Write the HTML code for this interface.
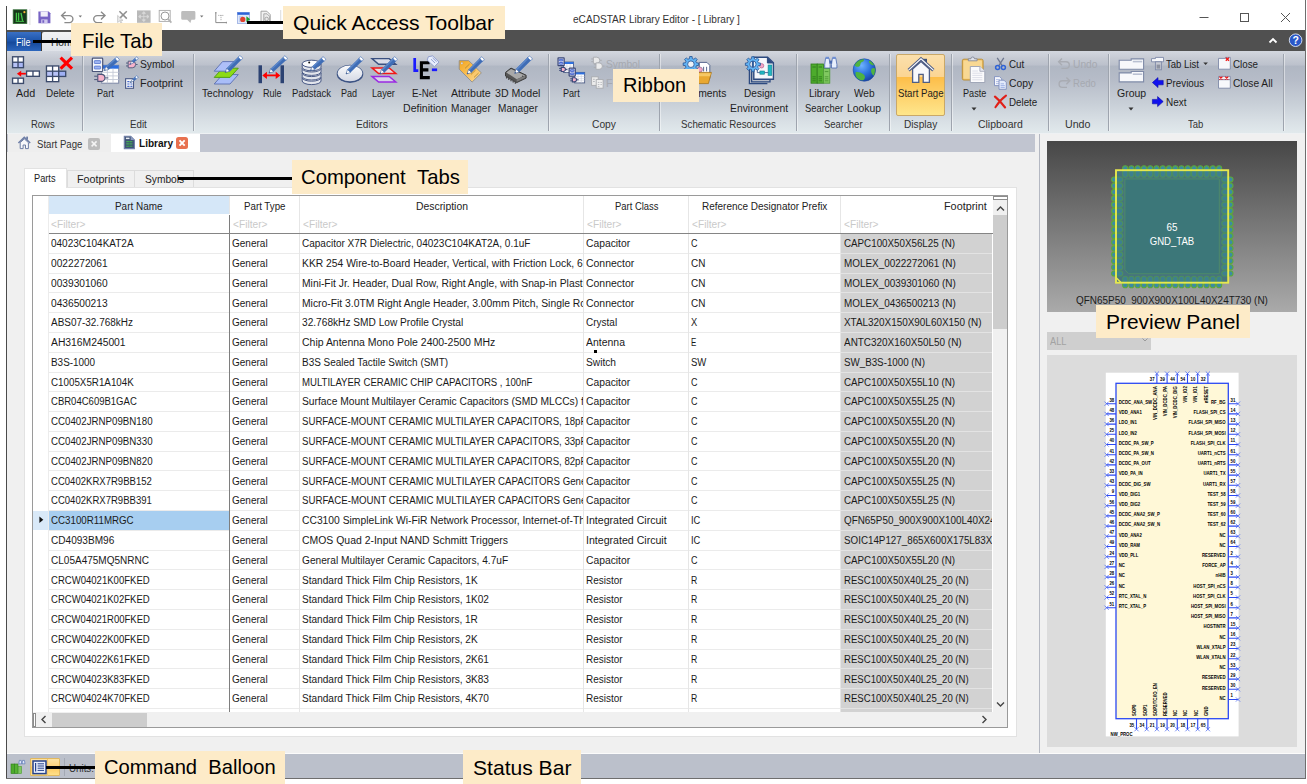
<!DOCTYPE html>
<html lang="en"><head><meta charset="utf-8"><title>eCADSTAR Library Editor - [ Library ]</title><style>
html,body{margin:0;padding:0;background:#fff;}
body{width:1307px;height:784px;position:relative;overflow:hidden;font-family:"Liberation Sans",Arial,sans-serif;}
.b{position:absolute;display:block;}
.t{position:absolute;white-space:pre;transform-origin:0 50%;display:block;}
svg{overflow:visible;}
svg text{font-family:"Liberation Sans",Arial,sans-serif;}
</style></head>
<body>
<div class="b" style="left:7.00px;top:0.00px;width:1298.00px;height:30.00px;background:#fff;"></div>
<div class="b" style="left:6.00px;top:6.00px;width:1.00px;height:773.00px;background:#4a4a4a;"></div>
<div class="b" style="left:1305.00px;top:0.00px;width:1.00px;height:779.00px;background:#6e6e6e;"></div>
<div class="b" style="left:6.00px;top:778.00px;width:1300.00px;height:1.00px;background:#6e6e6e;"></div>
<span class="t" style="left:573.00px;top:11.60px;font-size:10.86px;line-height:14px;color:#333;transform:scaleX(0.9292);">eCADSTAR Library Editor - [ Library ]</span>
<svg class="b" style="left:1198.00px;top:8.00px;" width="100" height="20" viewBox="0 0 100 20"><path d="M1.5 9.5h9" stroke="#555" stroke-width="1" fill="none"/><rect x="42.5" y="5.5" width="8" height="8" stroke="#555" stroke-width="1" fill="none"/><path d="M83 5l9 9M92 5l-9 9" stroke="#555" stroke-width="1" fill="none"/></svg>
<svg class="b" style="left:13.00px;top:9.00px;" width="270" height="16" viewBox="0 0 270 16"><rect x="0.200" y="0.800" width="13.600" height="13.600" fill="#17361a" stroke="#2e6a30" stroke-width="0.800"/><path d="M3.400 3.800v8M5.600 3.800v8M8 3.800l1.600 8" stroke="#46c84a" stroke-width="1.300"/><path d="M2.600 12.400h8.400" stroke="#46c84a" stroke-width="0.900"/><circle cx="11.400" cy="3.200" r="1.100" fill="#f5b530"/><rect x="16.400" y="0" width="1" height="16" fill="#dcdcdc"/><path d="M25.400 2.600h10.400l1.600 1.600v10h-12z" fill="#7763c4"/><rect x="27.600" y="2.600" width="7.200" height="5" fill="#f1effa"/><rect x="28.200" y="10.400" width="6.400" height="4" fill="#cfc8ee"/><rect x="29.400" y="11.200" width="1.800" height="2.600" fill="#7763c4"/><path d="M52.600 2.800l-4 3.800 4 3.800M48.800 6.600h7.600a3.500 3.500 0 0 1 0 7h-5" stroke="#8a8a8a" stroke-width="1.400" fill="none"/><path d="M65.600 6.600h3.400l-1.700 2z" fill="#777"/><path d="M88 2.800l4 3.800-4 3.800M91.800 6.600h-7.600a3.500 3.500 0 0 0 0 7h5" stroke="#8a8a8a" stroke-width="1.400" fill="none"/><path d="M106.400 2.200l7.400 7.400M113.800 2.200l-7.400 7.400" stroke="#8f8f8f" stroke-width="1.500"/><path d="M104.600 6.400v7.200l2-1.800 1.400 2.800 1-0.500-1.400-2.700h2.400z" fill="#e9e9e9" stroke="#b5b5b5" stroke-width="0.600"/><rect x="124" y="1.400" width="13.600" height="12.400" fill="#b9b9b9"/><path d="M130.800 3v9.200M126 7.600h9.600M130.800 2.600l-1.600 1.800h3.200zM130.800 12.600l-1.600-1.800h3.200zM125.600 7.600l1.800-1.600v3.200zM136 7.600l-1.800-1.600v3.200z" stroke="#d9d9d9" stroke-width="0.800" fill="#d9d9d9"/><rect x="146.200" y="1.400" width="11" height="11" fill="#fdfdfd" stroke="#ababab" stroke-width="0.900"/><circle cx="152" cy="7" r="4" fill="#fff" stroke="#9a9a9a" stroke-width="1"/><path d="M155 10l3.400 3.600" stroke="#b3b3b3" stroke-width="1.800"/><path d="M169.600 2h11.400a1.400 1.400 0 0 1 1.400 1.400v6a1.400 1.400 0 0 1-1.400 1.400h-2.600l-1 3.200-3.200-3.200h-4.600a1.400 1.400 0 0 1-1.400-1.400v-6a1.400 1.400 0 0 1 1.400-1.400z" fill="#bdbdbd"/><path d="M187 6.600h3.400l-1.700 2z" fill="#777"/><path d="M202.800 3.400v10.200h10.800" stroke="#8c8c8c" stroke-width="1" fill="none"/><path d="M202 3.800h1.600M213.400 12.800v1.600" stroke="#8c8c8c" stroke-width="1"/><path d="M208 6v6M205.200 6.400h5.600" stroke="#9c9c9c" stroke-width="0.800" stroke-dasharray="1.200 0.800"/><rect x="224.400" y="3.400" width="12" height="11" fill="#dfe8fa" stroke="#8aa2de" stroke-width="0.700"/><rect x="224.400" y="3.400" width="12" height="2.400" fill="#2c63d8"/><path d="M226 8h4M226 10h4M226 12h4" stroke="#8aa2de" stroke-width="0.700"/><circle cx="229.800" cy="10.400" r="2.600" fill="#e0402c"/><path d="M233.400 7.200l3.800 3-3.800 3z" fill="#22a030"/><path d="M248 2.200h5.800l3.400 3.400v8.600h-9.200z" fill="#f2f2f2" stroke="#9a9a9a" stroke-width="0.900"/><path d="M250.800 4.800h3.200l2.600 2.600v6.600h-5.800z" fill="#e9e9e9" stroke="#9a9a9a" stroke-width="0.800"/><circle cx="253.600" cy="10" r="1.800" fill="none" stroke="#9a9a9a" stroke-width="0.800"/><rect x="267.200" y="1" width="1" height="14" fill="#dcdcdc"/></svg>
<div class="b" style="left:7.00px;top:30.00px;width:1298.00px;height:21.00px;background:#505050;"></div>
<div class="b" style="left:7.00px;top:32.00px;width:33.50px;height:19.00px;background:linear-gradient(#3a70c4 0%,#1d55ab 45%,#164a9c 55%,#2c66bd 100%);border-right:1px solid #3a3a3a;"></div>
<span class="t" style="left:15.80px;top:34.60px;font-size:10.67px;line-height:14px;color:#fff;transform:scaleX(0.8369);">File</span>
<div class="b" style="left:42.00px;top:32.00px;width:36.00px;height:19.00px;background:linear-gradient(#f1f2f4,#dfe2e8);border-radius:2px 2px 0 0;"></div>
<span class="t" style="left:51.00px;top:34.60px;font-size:10.67px;line-height:14px;color:#222;transform:scaleX(0.9549);">Home</span>
<svg class="b" style="left:1266.00px;top:33.00px;" width="40" height="16" viewBox="0 0 40 16"><path d="M3.5 9.5l3.5-3.5 3.5 3.5" stroke="#fff" stroke-width="1.8" fill="none"/><circle cx="29.6" cy="7.2" r="6.3" fill="#2a57c8" stroke="#dfe6f5" stroke-width="0.9"/><text x="29.6" y="11" font-family="Liberation Sans,sans-serif" font-size="10.5" font-weight="bold" fill="#fff" text-anchor="middle">?</text></svg>
<div class="b" style="left:7.00px;top:51.00px;width:1298.00px;height:81.50px;background:linear-gradient(#d3d7df 0%,#c6cad3 9%,#bcc1cc 17%,#b0b7c3 18.5%,#b6bcc8 35%,#c9d0d8 65%,#dae1e6 88%,#e1e9ec 100%);"></div>
<div class="b" style="left:7.00px;top:132.50px;width:1298.00px;height:1.00px;background:#eef1f3;"></div>
<div class="b" style="left:81.80px;top:54.00px;width:1.00px;height:77.00px;background:#9ea4ae;"></div>
<div class="b" style="left:82.80px;top:54.00px;width:1.00px;height:77.00px;background:rgba(255,255,255,.45);"></div>
<div class="b" style="left:193.10px;top:54.00px;width:1.00px;height:77.00px;background:#9ea4ae;"></div>
<div class="b" style="left:194.10px;top:54.00px;width:1.00px;height:77.00px;background:rgba(255,255,255,.45);"></div>
<div class="b" style="left:548.10px;top:54.00px;width:1.00px;height:77.00px;background:#9ea4ae;"></div>
<div class="b" style="left:549.10px;top:54.00px;width:1.00px;height:77.00px;background:rgba(255,255,255,.45);"></div>
<div class="b" style="left:659.10px;top:54.00px;width:1.00px;height:77.00px;background:#9ea4ae;"></div>
<div class="b" style="left:660.10px;top:54.00px;width:1.00px;height:77.00px;background:rgba(255,255,255,.45);"></div>
<div class="b" style="left:795.90px;top:54.00px;width:1.00px;height:77.00px;background:#9ea4ae;"></div>
<div class="b" style="left:796.90px;top:54.00px;width:1.00px;height:77.00px;background:rgba(255,255,255,.45);"></div>
<div class="b" style="left:889.00px;top:54.00px;width:1.00px;height:77.00px;background:#9ea4ae;"></div>
<div class="b" style="left:890.00px;top:54.00px;width:1.00px;height:77.00px;background:rgba(255,255,255,.45);"></div>
<div class="b" style="left:950.90px;top:54.00px;width:1.00px;height:77.00px;background:#9ea4ae;"></div>
<div class="b" style="left:951.90px;top:54.00px;width:1.00px;height:77.00px;background:rgba(255,255,255,.45);"></div>
<div class="b" style="left:1047.90px;top:54.00px;width:1.00px;height:77.00px;background:#9ea4ae;"></div>
<div class="b" style="left:1048.90px;top:54.00px;width:1.00px;height:77.00px;background:rgba(255,255,255,.45);"></div>
<div class="b" style="left:1107.90px;top:54.00px;width:1.00px;height:77.00px;background:#9ea4ae;"></div>
<div class="b" style="left:1108.90px;top:54.00px;width:1.00px;height:77.00px;background:rgba(255,255,255,.45);"></div>
<div class="b" style="left:1282.60px;top:54.00px;width:1.00px;height:77.00px;background:#9ea4ae;"></div>
<div class="b" style="left:1283.60px;top:54.00px;width:1.00px;height:77.00px;background:rgba(255,255,255,.45);"></div>
<span class="t" style="left:30.55px;top:117.40px;font-size:10.67px;line-height:14px;color:#333;transform:scaleX(0.8885);">Rows</span>
<span class="t" style="left:129.80px;top:117.40px;font-size:10.67px;line-height:14px;color:#333;transform:scaleX(0.9141);">Edit</span>
<span class="t" style="left:355.50px;top:117.40px;font-size:10.67px;line-height:14px;color:#333;transform:scaleX(0.9575);">Editors</span>
<span class="t" style="left:592.00px;top:117.40px;font-size:10.67px;line-height:14px;color:#333;transform:scaleX(0.9633);">Copy</span>
<span class="t" style="left:680.70px;top:117.40px;font-size:10.67px;line-height:14px;color:#333;transform:scaleX(0.9153);">Schematic Resources</span>
<span class="t" style="left:823.60px;top:117.40px;font-size:10.67px;line-height:14px;color:#333;transform:scaleX(0.8916);">Searcher</span>
<span class="t" style="left:903.65px;top:117.40px;font-size:10.67px;line-height:14px;color:#333;transform:scaleX(0.9515);">Display</span>
<span class="t" style="left:977.50px;top:117.40px;font-size:10.67px;line-height:14px;color:#333;transform:scaleX(0.9810);">Clipboard</span>
<span class="t" style="left:1065.45px;top:117.40px;font-size:10.67px;line-height:14px;color:#333;transform:scaleX(0.9999);">Undo</span>
<span class="t" style="left:1188.05px;top:117.40px;font-size:10.67px;line-height:14px;color:#333;transform:scaleX(0.8893);">Tab</span>
<svg class="b" style="left:11.00px;top:55.00px;" width="30" height="30" viewBox="0 0 30 30"><rect x="0.90" y="1.10" width="12.25" height="12.25" fill="#3b4a6b"/><rect x="2.25" y="2.45" width="4.10" height="4.10" fill="#fff"/><rect x="7.70" y="2.45" width="4.10" height="4.10" fill="#fff"/><rect x="2.25" y="7.90" width="4.10" height="4.10" fill="#b7c2f6"/><rect x="7.70" y="7.90" width="4.10" height="4.10" fill="#a9b7f5"/><rect x="14.90" y="15.40" width="14.15" height="6.60" fill="#3b4a6b"/><rect x="16.25" y="16.75" width="5.05" height="3.90" fill="#fff"/><rect x="22.65" y="16.75" width="5.05" height="3.90" fill="#fff"/><rect x="0.90" y="22.50" width="12.25" height="6.60" fill="#3b4a6b"/><rect x="2.25" y="23.85" width="4.10" height="3.90" fill="#fff"/><rect x="7.70" y="23.85" width="4.10" height="3.90" fill="#fff"/><path d="M14.9 18.7H9.6" stroke="#f00" stroke-width="1.7"/><path d="M5.9 18.7l4.3-3v6z" fill="#f00"/></svg>
<span class="t" style="left:16.00px;top:86.20px;font-size:10.67px;line-height:14px;color:#1e1e1e;transform:scaleX(1.0109);">Add</span>
<svg class="b" style="left:45.00px;top:55.00px;" width="30" height="30" viewBox="0 0 30 30"><rect x="0.80" y="10.30" width="13.59" height="17.02" fill="#3b4a6b"/><rect x="2.13" y="11.63" width="4.80" height="3.90" fill="#fff"/><rect x="8.26" y="11.63" width="4.80" height="3.90" fill="#fff"/><rect x="2.13" y="16.86" width="4.80" height="3.90" fill="#b7c2f6"/><rect x="8.26" y="16.86" width="4.80" height="3.90" fill="#b7c2f6"/><rect x="2.13" y="22.09" width="4.80" height="3.90" fill="#fff"/><rect x="8.26" y="22.09" width="4.80" height="3.90" fill="#fff"/><rect x="13.10" y="15.55" width="8.26" height="6.56" fill="#3b4a6b"/><rect x="14.43" y="16.88" width="5.60" height="3.90" fill="#9fb0f4"/><path d="M15.6 2.6l11.4 11M27 2.6l-11.4 11" stroke="#f00" stroke-width="3.1" fill="none"/></svg>
<span class="t" style="left:45.60px;top:86.20px;font-size:10.67px;line-height:14px;color:#1e1e1e;transform:scaleX(0.9275);">Delete</span>
<svg class="b" style="left:91.00px;top:56.00px;" width="29" height="29" viewBox="0 0 29 29"><g transform="scale(1.000)"><rect x="10.7" y="9.3" width="17" height="17.9" fill="#fff" stroke="#7d88a6" stroke-width="1"/><rect x="10.7" y="9.3" width="17" height="3.4" fill="#2c6fe0"/><path d="M10.7 16.3h17M10.7 19.9h17M10.7 23.5h17M16.4 12.7v14.5M22 12.7v14.5" stroke="#c3c8d6" stroke-width="0.9" fill="none"/><rect x="1.3" y="2.1" width="10.4" height="13.4" rx="0.8" fill="#f4f6fb" stroke="#4a5578" stroke-width="1.2"/><rect x="3.3" y="4.6" width="6.3" height="2.9" rx="0.6" fill="#9fb4f2" stroke="#4668c8" stroke-width="0.7"/><rect x="3.3" y="10.1" width="6.3" height="2.9" rx="0.6" fill="#9fb4f2" stroke="#4668c8" stroke-width="0.7"/><path d="M3.2 20.2h3.6M3.2 23.6h3.6M14 21.9h3.4" stroke="#4a5578" stroke-width="1" fill="none"/><path d="M6.8 18.4h3.6a3.5 3.5 0 0 1 0 7h-3.6z" fill="#f6b3cb" stroke="#4a5578" stroke-width="1.1"/><g transform="translate(13.20 14.60) rotate(-41.10)"><path d="M0 0L4.20 -2.15L4.20 2.15z" fill="#fff" stroke="#2c4f8c" stroke-width="0.5"/><path d="M0 0L1.5 -0.75L1.5 0.75z" fill="#2c4f8c"/><rect x="4.20" y="-2.15" width="12.51" height="4.30" fill="#3f6db6"/><rect x="4.20" y="-2.15" width="12.51" height="1.50" fill="#5b86c8"/><rect x="16.11" y="-2.15" width="2.60" height="4.30" rx="1" fill="#fff" stroke="#3f6db6" stroke-width="0.6"/></g></g></svg>
<span class="t" style="left:97.20px;top:86.20px;font-size:10.67px;line-height:14px;color:#1e1e1e;transform:scaleX(0.8580);">Part</span>
<svg class="b" style="left:124.00px;top:56.00px;" width="15" height="15" viewBox="0 0 15 15"><path d="M4.20 7.05h-2.2M4.20 9.95h-2.2M11.60 8.50h2" stroke="#4a5578" stroke-width="0.90" fill="none"/><path d="M4.20 5.20h4.10a3.30 3.30 0 0 1 0 6.60h-4.10z" fill="#f6b3cb" stroke="#4a5578" stroke-width="0.90"/><g transform="translate(5.60 8.60) rotate(-41.19)"><path d="M0 0L4.20 -1.30L4.20 1.30z" fill="#fff" stroke="#2c4f8c" stroke-width="0.5"/><path d="M0 0L1.5 -0.75L1.5 0.75z" fill="#2c4f8c"/><rect x="4.20" y="-1.30" width="4.43" height="2.60" fill="#3f6db6"/><rect x="4.20" y="-1.30" width="4.43" height="0.91" fill="#5b86c8"/><rect x="8.03" y="-1.30" width="2.60" height="2.60" rx="1" fill="#fff" stroke="#3f6db6" stroke-width="0.6"/></g></svg>
<span class="t" style="left:140.00px;top:56.50px;font-size:10.67px;line-height:14px;color:#1e1e1e;transform:scaleX(0.9667);">Symbol</span>
<svg class="b" style="left:124.00px;top:75.00px;" width="15" height="15" viewBox="0 0 15 15"><rect x="1.6" y="3.7" width="7.9" height="9.6" fill="#f6f8fc" stroke="#4a5a86" stroke-width="1.1"/><path d="M3.3 6.6h2.2M3.3 9h2.2M3.3 11.3h2.2M6.4 9h2M6.4 11.3h2" stroke="#4668c8" stroke-width="1.2" fill="none"/><g transform="translate(6.20 7.60) rotate(-39.96)"><path d="M0 0L4.20 -1.25L4.20 1.25z" fill="#fff" stroke="#2c4f8c" stroke-width="0.5"/><path d="M0 0L1.5 -0.75L1.5 0.75z" fill="#2c4f8c"/><rect x="4.20" y="-1.25" width="3.45" height="2.50" fill="#3f6db6"/><rect x="4.20" y="-1.25" width="3.45" height="0.88" fill="#5b86c8"/><rect x="7.05" y="-1.25" width="2.60" height="2.50" rx="1" fill="#fff" stroke="#3f6db6" stroke-width="0.6"/></g></svg>
<span class="t" style="left:140.00px;top:75.60px;font-size:10.67px;line-height:14px;color:#1e1e1e;transform:scaleX(1.0185);">Footprint</span>
<svg class="b" style="left:212.00px;top:55.00px;" width="32" height="30" viewBox="0 0 32 30"><path d="M2.2 29l8.3-9.4h15.8l-8.3 9.4z" fill="#a9bdf8" stroke="#5b6fb0" stroke-width="0.9"/><path d="M2.2 22.4l8.3-9.2h15.8l-8.3 9.2z" fill="#8cdb17" stroke="#4b9a10" stroke-width="0.9"/><path d="M2.2 16.2l8.3-9.6h15.8l-8.3 9.6z" fill="#aebff8" stroke="#5b6fb0" stroke-width="0.9"/><g transform="translate(13.20 17.60) rotate(-44.28)"><path d="M0 0L4.20 -2.15L4.20 2.15z" fill="#fff" stroke="#2c4f8c" stroke-width="0.5"/><path d="M0 0L1.5 -0.75L1.5 0.75z" fill="#2c4f8c"/><rect x="4.20" y="-2.15" width="16.43" height="4.30" fill="#3f6db6"/><rect x="4.20" y="-2.15" width="16.43" height="1.50" fill="#5b86c8"/><rect x="20.03" y="-2.15" width="2.60" height="4.30" rx="1" fill="#fff" stroke="#3f6db6" stroke-width="0.6"/></g></svg>
<span class="t" style="left:202.15px;top:86.20px;font-size:10.67px;line-height:14px;color:#1e1e1e;transform:scaleX(0.9502);">Technology</span>
<svg class="b" style="left:257.00px;top:55.00px;" width="32" height="30" viewBox="0 0 32 30"><rect x="1.5" y="10.3" width="3.5" height="17.9" fill="#2c4272"/><rect x="23.5" y="10.3" width="3.5" height="17.9" fill="#2c4272"/><path d="M8.6 20.4h11.4" stroke="#f00" stroke-width="1.8"/><path d="M5.3 20.4l4.6-3.7v7.4zM23.3 20.4l-4.6-3.7v7.4z" fill="#f00"/><g transform="translate(12.00 18.10) rotate(-42.76)"><path d="M0 0L4.20 -2.15L4.20 2.15z" fill="#fff" stroke="#2c4f8c" stroke-width="0.5"/><path d="M0 0L1.5 -0.75L1.5 0.75z" fill="#2c4f8c"/><rect x="4.20" y="-2.15" width="17.36" height="4.30" fill="#3f6db6"/><rect x="4.20" y="-2.15" width="17.36" height="1.50" fill="#5b86c8"/><rect x="20.96" y="-2.15" width="2.60" height="4.30" rx="1" fill="#fff" stroke="#3f6db6" stroke-width="0.6"/></g></svg>
<span class="t" style="left:263.05px;top:86.20px;font-size:10.67px;line-height:14px;color:#1e1e1e;transform:scaleX(0.8518);">Rule</span>
<svg class="b" style="left:299.00px;top:55.00px;" width="32" height="30" viewBox="0 0 32 30"><path d="M3.2 22.60v3.4a9.4 3.6 0 0 0 18.8 0v-3.4z" fill="#e2e5ec" stroke="#4a5a86" stroke-width="1"/><ellipse cx="12.6" cy="22.60" rx="9.4" ry="3.6" fill="#f4f5f8" stroke="#4a5a86" stroke-width="1"/><path d="M3.2 18.00v3.4a9.4 3.6 0 0 0 18.8 0v-3.4z" fill="#e2e5ec" stroke="#4a5a86" stroke-width="1"/><ellipse cx="12.6" cy="18.00" rx="9.4" ry="3.6" fill="#f4f5f8" stroke="#4a5a86" stroke-width="1"/><path d="M3.2 13.40v3.4a9.4 3.6 0 0 0 18.8 0v-3.4z" fill="#e2e5ec" stroke="#4a5a86" stroke-width="1"/><ellipse cx="12.6" cy="13.40" rx="9.4" ry="3.6" fill="#f4f5f8" stroke="#4a5a86" stroke-width="1"/><path d="M3.2 8.80v3.4a9.4 3.6 0 0 0 18.8 0v-3.4z" fill="#e2e5ec" stroke="#4a5a86" stroke-width="1"/><ellipse cx="12.6" cy="8.80" rx="9.4" ry="3.6" fill="#fafbfd" stroke="#4a5a86" stroke-width="1"/><circle cx="10.2" cy="7.6" r="1" fill="#111"/><g transform="translate(11.40 15.80) rotate(-42.03)"><path d="M0 0L4.20 -2.10L4.20 2.10z" fill="#fff" stroke="#2c4f8c" stroke-width="0.5"/><path d="M0 0L1.5 -0.75L1.5 0.75z" fill="#2c4f8c"/><rect x="4.20" y="-2.10" width="12.92" height="4.20" fill="#3f6db6"/><rect x="4.20" y="-2.10" width="12.92" height="1.47" fill="#5b86c8"/><rect x="16.52" y="-2.10" width="2.60" height="4.20" rx="1" fill="#fff" stroke="#3f6db6" stroke-width="0.6"/></g></svg>
<span class="t" style="left:291.80px;top:86.20px;font-size:10.67px;line-height:14px;color:#1e1e1e;transform:scaleX(0.8882);">Padstack</span>
<svg class="b" style="left:334.00px;top:55.00px;" width="32" height="30" viewBox="0 0 32 30"><defs><linearGradient id="gPd" x1="0" y1="0" x2="0" y2="1"><stop offset="0" stop-color="#fafbfd"/><stop offset="1" stop-color="#d5d9e4"/></linearGradient></defs><ellipse cx="16" cy="18.900" rx="13.300" ry="9.100" fill="#3c5384"/><ellipse cx="16" cy="18.300" rx="12.300" ry="7.900" fill="url(#gPd)"/><g transform="translate(12.00 19.00) rotate(-44.82)"><path d="M0 0L4.20 -2.15L4.20 2.15z" fill="#fff" stroke="#2c4f8c" stroke-width="0.5"/><path d="M0 0L1.5 -0.75L1.5 0.75z" fill="#2c4f8c"/><rect x="4.20" y="-2.15" width="16.50" height="4.30" fill="#3f6db6"/><rect x="4.20" y="-2.15" width="16.50" height="1.50" fill="#5b86c8"/><rect x="20.10" y="-2.15" width="2.60" height="4.30" rx="1" fill="#fff" stroke="#3f6db6" stroke-width="0.6"/></g></svg>
<span class="t" style="left:341.45px;top:86.20px;font-size:10.67px;line-height:14px;color:#1e1e1e;transform:scaleX(0.8477);">Pad</span>
<svg class="b" style="left:369.00px;top:55.00px;" width="32" height="30" viewBox="0 0 32 30"><path d="M3 3.6h17.2l6.6 5.6h-17.2z" fill="#d9dde8" stroke="#3a5080" stroke-width="1.4"/><path d="M3 12.9h17.2l6.6 5.6h-17.2z" fill="#e9d9de" stroke="#f01818" stroke-width="1.5"/><path d="M3 21.4h17.2l6.6 5.6h-17.2z" fill="#d9d3ea" stroke="#9a2be2" stroke-width="1.5"/><g transform="translate(11.00 18.90) rotate(-44.64)"><path d="M0 0L4.20 -2.15L4.20 2.15z" fill="#fff" stroke="#2c4f8c" stroke-width="0.5"/><path d="M0 0L1.5 -0.75L1.5 0.75z" fill="#2c4f8c"/><rect x="4.20" y="-2.15" width="16.43" height="4.30" fill="#3f6db6"/><rect x="4.20" y="-2.15" width="16.43" height="1.50" fill="#5b86c8"/><rect x="20.03" y="-2.15" width="2.60" height="4.30" rx="1" fill="#fff" stroke="#3f6db6" stroke-width="0.6"/></g></svg>
<span class="t" style="left:371.95px;top:86.20px;font-size:10.67px;line-height:14px;color:#1e1e1e;transform:scaleX(0.8576);">Layer</span>
<svg class="b" style="left:411.00px;top:55.00px;" width="32" height="30" viewBox="0 0 32 30"><path d="M3.7 3v12.6h3.6" stroke="#1b1bff" stroke-width="2.7" fill="none"/><path d="M20.9 14.8h5.2" stroke="#1b1bff" stroke-width="2.7" fill="none"/><path d="M18.6 7.7h-8.2v14.9h8.4M10.4 14.9h7" stroke="#000" stroke-width="3.1" fill="none"/><path d="M21.6 0.9l6.4 6.2-4.6 4.6-7.2-6.6 1.2-3.4z" fill="#e8eefc" stroke="#8090c8" stroke-width="0.8"/><path d="M20 4.2l4 3.8M21.6 2.9l4 3.8" stroke="#8090c8" stroke-width="0.8"/></svg>
<span class="t" style="left:412.10px;top:86.20px;font-size:10.67px;line-height:14px;color:#1e1e1e;transform:scaleX(0.9170);">E-Net</span>
<span class="t" style="left:402.55px;top:101.00px;font-size:10.67px;line-height:14px;color:#1e1e1e;transform:scaleX(0.9911);">Definition</span>
<svg class="b" style="left:456.00px;top:55.00px;" width="32" height="30" viewBox="0 0 32 30"><defs><linearGradient id="gAt" x1="0" y1="0" x2="1" y2="1"><stop offset="0" stop-color="#f5a51a"/><stop offset="1" stop-color="#fcdc9a"/></linearGradient></defs><path d="M3.2 5.6h9.4l12.8 12.3-9.3 9.2-12.9-12.9z" fill="url(#gAt)" stroke="#8f8f8f" stroke-width="0.9"/><circle cx="5.9" cy="8.2" r="1" fill="#fff" stroke="#8f8f8f" stroke-width="0.5"/><path d="M9 13.4l4.6-4.4M12 16.4l4.6-4.4M15 19.4l4.6-4.4M18 22.4l4.6-4.4" stroke="#b08428" stroke-width="0.8"/><g transform="translate(11.10 19.00) rotate(-45.00)"><path d="M0 0L4.20 -2.15L4.20 2.15z" fill="#fff" stroke="#2c4f8c" stroke-width="0.5"/><path d="M0 0L1.5 -0.75L1.5 0.75z" fill="#2c4f8c"/><rect x="4.20" y="-2.15" width="16.29" height="4.30" fill="#3f6db6"/><rect x="4.20" y="-2.15" width="16.29" height="1.50" fill="#5b86c8"/><rect x="19.89" y="-2.15" width="2.60" height="4.30" rx="1" fill="#fff" stroke="#3f6db6" stroke-width="0.6"/></g></svg>
<span class="t" style="left:451.00px;top:86.20px;font-size:10.67px;line-height:14px;color:#1e1e1e;transform:scaleX(1.0014);">Attribute</span>
<span class="t" style="left:451.00px;top:101.00px;font-size:10.67px;line-height:14px;color:#1e1e1e;transform:scaleX(0.9449);">Manager</span>
<svg class="b" style="left:503.00px;top:55.00px;" width="32" height="30" viewBox="0 0 32 30"><path d="M2.500 17.400l5.500-4.300 15.100 7.100v2.900l-9.400 4.500-11.200-6.600z" fill="#555" stroke="#3c3c3c" stroke-width="1" stroke-linejoin="round"/><path d="M3.300 17.500l4.800-3.600 14 6.500-8.400 3.900z" fill="#a9a9a9"/><path d="M13.700 24.500l8.600-4v2.300l-8.600 4z" fill="#7c7c7c"/><circle cx="19.600" cy="21.200" r="0.800" fill="#4a4a4a"/><path d="M3.600 21.600v2M5.800 22.900v2M8 24.200v2M10.200 25.500v2M12.400 26.800v2" stroke="#4a4a4a" stroke-width="1.300"/><g transform="translate(11.70 18.40) rotate(-44.65)"><path d="M0 0L4.20 -2.25L4.20 2.25z" fill="#fff" stroke="#2c4f8c" stroke-width="0.5"/><path d="M0 0L1.5 -0.75L1.5 0.75z" fill="#2c4f8c"/><rect x="4.20" y="-2.25" width="16.71" height="4.50" fill="#3f6db6"/><rect x="4.20" y="-2.25" width="16.71" height="1.57" fill="#5b86c8"/><rect x="20.31" y="-2.25" width="2.60" height="4.50" rx="1" fill="#fff" stroke="#3f6db6" stroke-width="0.6"/></g></svg>
<span class="t" style="left:495.05px;top:86.20px;font-size:10.67px;line-height:14px;color:#1e1e1e;transform:scaleX(0.9963);">3D Model</span>
<span class="t" style="left:497.90px;top:101.00px;font-size:10.67px;line-height:14px;color:#1e1e1e;transform:scaleX(0.9449);">Manager</span>
<svg class="b" style="left:557.00px;top:56.00px;" width="30" height="29" viewBox="0 0 30 29"><g transform="translate(0.3 0.6) scale(0.585)"><rect x="10.7" y="9.3" width="17" height="17.9" fill="#fff" stroke="#5a688e" stroke-width="1.7"/><rect x="10.7" y="9.3" width="17" height="3.4" fill="#2c6fe0"/><path d="M10.7 16.3h17M10.7 19.9h17M10.7 23.5h17M16.4 12.7v14.5M22 12.7v14.5" stroke="#c3c8d6" stroke-width="0.9" fill="none"/><rect x="1.3" y="2.1" width="10.4" height="13.4" rx="0.8" fill="#f4f6fb" stroke="#3a4778" stroke-width="2.1"/><rect x="3.3" y="4.6" width="6.3" height="2.9" rx="0.6" fill="#9fb4f2" stroke="#3050c0" stroke-width="1.4"/><rect x="3.3" y="10.1" width="6.3" height="2.9" rx="0.6" fill="#9fb4f2" stroke="#3050c0" stroke-width="1.4"/><path d="M3.2 20.2h3.6M3.2 23.6h3.6M14 21.9h3.4" stroke="#3a4778" stroke-width="1.7" fill="none"/><path d="M6.8 18.4h3.6a3.5 3.5 0 0 1 0 7h-3.6z" fill="#f6b3cb" stroke="#3a4778" stroke-width="1.9"/></g><g transform="translate(11.4 11) scale(0.585)"><rect x="10.7" y="9.3" width="17" height="17.9" fill="#fff" stroke="#5a688e" stroke-width="1.7"/><rect x="10.7" y="9.3" width="17" height="3.4" fill="#2c6fe0"/><path d="M10.7 16.3h17M10.7 19.9h17M10.7 23.5h17M16.4 12.7v14.5M22 12.7v14.5" stroke="#c3c8d6" stroke-width="0.9" fill="none"/><rect x="1.3" y="2.1" width="10.4" height="13.4" rx="0.8" fill="#f4f6fb" stroke="#3a4778" stroke-width="2.1"/><rect x="3.3" y="4.6" width="6.3" height="2.9" rx="0.6" fill="#9fb4f2" stroke="#3050c0" stroke-width="1.4"/><rect x="3.3" y="10.1" width="6.3" height="2.9" rx="0.6" fill="#9fb4f2" stroke="#3050c0" stroke-width="1.4"/><path d="M3.2 20.2h3.6M3.2 23.6h3.6M14 21.9h3.4" stroke="#3a4778" stroke-width="1.7" fill="none"/><path d="M6.8 18.4h3.6a3.5 3.5 0 0 1 0 7h-3.6z" fill="#f6b3cb" stroke="#3a4778" stroke-width="1.9"/></g></svg>
<span class="t" style="left:563.25px;top:86.20px;font-size:10.67px;line-height:14px;color:#1e1e1e;transform:scaleX(0.8529);">Part</span>
<svg class="b" style="left:590.00px;top:56.00px;" width="15" height="15" viewBox="0 0 15 15"><path d="M3.40 2.94h-2.2M3.40 5.66h-2.2M9.80 4.30h2" stroke="#a9abb0" stroke-width="0.90" fill="none"/><path d="M3.40 1.20h3.30a3.10 3.10 0 0 1 0 6.20h-3.30z" fill="#e9e9ea" stroke="#a9abb0" stroke-width="0.90"/><path d="M6.00 8.69h-2.2M6.00 11.51h-2.2M12.40 10.10h2" stroke="#a9abb0" stroke-width="0.90" fill="none"/><path d="M6.00 6.90h3.20a3.20 3.20 0 0 1 0 6.40h-3.20z" fill="#ececed" stroke="#a9abb0" stroke-width="0.90"/></svg>
<span class="t" style="left:606.10px;top:56.50px;font-size:10.67px;line-height:14px;color:#a6a9b0;transform:scaleX(0.9583);">Symbol</span>
<svg class="b" style="left:590.00px;top:75.00px;" width="15" height="15" viewBox="0 0 15 15"><rect x="1.6" y="1.8" width="6.6" height="8.6" fill="#ececec" stroke="#a9abb0" stroke-width="0.9"/><rect x="6.2" y="4.6" width="6.9" height="8.6" fill="#f1f1f1" stroke="#a9abb0" stroke-width="0.9"/><path d="M3 4.3h1.8M3 6.5h1.8M7.8 7.4h1.6M7.8 9.6h1.6M10.4 7.4h1.5M10.4 9.6h1.5M7.8 11.6h1.6" stroke="#b9bbc0" stroke-width="1" fill="none"/></svg>
<span class="t" style="left:606.10px;top:75.60px;font-size:10.67px;line-height:14px;color:#a6a9b0;transform:scaleX(1.0185);">Footprint</span>
<svg class="b" style="left:682.00px;top:55.00px;" width="32" height="30" viewBox="0 0 32 30"><path d="M17.3 7.4h7.6l2.9 2.9v13h-10.5z" fill="#fff" stroke="#4a5a86" stroke-width="0.9"/><circle cx="17.8" cy="14.6" r="2.6" fill="#f4a6c6" stroke="#7a5a86" stroke-width="0.6"/><path d="M21.6 11.8v4.6M24.6 11.8v4.6" stroke="#4a5a86" stroke-width="0.9"/><path d="M12.4 17.4h17l-3 11.2h-14z" fill="#e9a832" stroke="#a87418" stroke-width="0.8"/><path d="M12.8 18.2h16l-0.8 3h-15.2z" fill="#f6c866"/><path d="M16.60 7.98L16.60 10.42L14.51 10.55L13.82 12.22L15.21 13.78L13.48 15.51L11.92 14.12L10.25 14.81L10.12 16.90L7.68 16.90L7.55 14.81L5.88 14.12L4.32 15.51L2.59 13.78L3.98 12.22L3.29 10.55L1.20 10.42L1.20 7.98L3.29 7.85L3.98 6.18L2.59 4.62L4.32 2.89L5.88 4.28L7.55 3.59L7.68 1.50L10.12 1.50L10.25 3.59L11.92 4.28L13.48 2.89L15.21 4.62L13.82 6.18L14.51 7.85z" fill="#62b4f4" stroke="#2f5c9c" stroke-width="0.9"/><circle cx="8.90" cy="9.20" r="3.28" fill="#eef2f8" stroke="#2f5c9c" stroke-width="0.9"/></svg>
<span class="t" style="left:674.30px;top:86.20px;font-size:10.67px;line-height:14px;color:#1e1e1e;transform:scaleX(0.9710);">Documents</span>
<svg class="b" style="left:744.00px;top:55.00px;" width="32" height="30" viewBox="0 0 32 30"><path d="M5.4 6.6v22h18" fill="none" stroke="#2d4a80" stroke-width="1.3"/><path d="M7.6 4.6v22.2h18.4v-3" fill="none" stroke="#2d4a80" stroke-width="1.3"/><path d="M9.8 2.2h13.8l5.8 5.6v16.4h-19.6z" fill="#f5f7fb" stroke="#2d4a80" stroke-width="1.4"/><path d="M23.4 2.4v5.6h5.8" fill="#2d4a80" stroke="#2d4a80" stroke-width="1"/><rect x="24.1" y="10" width="3.7" height="10.4" fill="#1fb6c2" stroke="#17808c" stroke-width="0.6"/><rect x="15.9" y="16" width="4.6" height="3.2" fill="#1fb6c2" stroke="#17808c" stroke-width="0.6"/><circle cx="17.6" cy="10.8" r="2.2" fill="#f4a6c6" stroke="#a8507a" stroke-width="0.6"/><path d="M20.5 17.6h3.6M15.9 17.6h-2.6v-3" stroke="#2d4a80" stroke-width="0.8" fill="none"/><path d="M16.41 8.01L16.41 10.39L14.37 10.51L13.70 12.14L15.05 13.67L13.37 15.35L11.84 14.00L10.21 14.67L10.09 16.71L7.71 16.71L7.59 14.67L5.96 14.00L4.43 15.35L2.75 13.67L4.10 12.14L3.43 10.51L1.39 10.39L1.39 8.01L3.43 7.89L4.10 6.26L2.75 4.73L4.43 3.05L5.96 4.40L7.59 3.73L7.71 1.69L10.09 1.69L10.21 3.73L11.84 4.40L13.37 3.05L15.05 4.73L13.70 6.26L14.37 7.89z" fill="#62b4f4" stroke="#2f5c9c" stroke-width="0.9"/><circle cx="8.90" cy="9.20" r="3.19" fill="#eef2f8" stroke="#2f5c9c" stroke-width="0.9"/><rect x="7.9" y="6" width="2" height="6.4" fill="#2f5c9c"/></svg>
<span class="t" style="left:743.70px;top:86.20px;font-size:10.67px;line-height:14px;color:#1e1e1e;transform:scaleX(0.9455);">Design</span>
<span class="t" style="left:730.30px;top:101.00px;font-size:10.67px;line-height:14px;color:#1e1e1e;transform:scaleX(0.9714);">Environment</span>
<svg class="b" style="left:809.00px;top:55.00px;" width="32" height="30" viewBox="0 0 32 30"><rect x="2.00" y="9.00" width="6.20" height="19.20" fill="#4dab2c" stroke="#2f7c1c" stroke-width="0.8"/><path d="M3.40 21.80h3.40M3.40 23.80h3.40M3.40 25.80h3.40" stroke="#2f7c1c" stroke-width="0.9"/><path d="M3.40 12.00h3.40" stroke="#2f7c1c" stroke-width="1"/><rect x="8.20" y="9.00" width="6.20" height="19.20" fill="#55b233" stroke="#2f7c1c" stroke-width="0.8"/><path d="M9.60 21.80h3.40M9.60 23.80h3.40M9.60 25.80h3.40" stroke="#2f7c1c" stroke-width="0.9"/><path d="M9.60 12.00h3.40" stroke="#2f7c1c" stroke-width="1"/><rect x="14.40" y="13.60" width="6.40" height="14.60" fill="#80c860" stroke="#4d9a36" stroke-width="0.8"/><path d="M15.80 21.80h3.60M15.80 23.80h3.60M15.80 25.80h3.60" stroke="#4d9a36" stroke-width="0.9"/><path d="M15.80 16.60h3.60" stroke="#4d9a36" stroke-width="1"/><path d="M16.6 3.2h3.4l1.1 6.2v3.6h-5.4v-3.6z" fill="#e8effc" stroke="#4a6ab0" stroke-width="0.8"/><path d="M23.4 3.2h3.4l1.1 6.2v3.6h-5.4v-3.6z" fill="#e8effc" stroke="#4a6ab0" stroke-width="0.8"/><rect x="20.6" y="5.6" width="2.4" height="3" fill="#4a6ab0"/><rect x="16.6" y="1.8" width="3.4" height="2" fill="#6f8fd4"/><rect x="23.4" y="1.8" width="3.4" height="2" fill="#6f8fd4"/></svg>
<span class="t" style="left:808.55px;top:86.20px;font-size:10.67px;line-height:14px;color:#1e1e1e;transform:scaleX(0.9410);">Library</span>
<span class="t" style="left:804.80px;top:101.00px;font-size:10.67px;line-height:14px;color:#1e1e1e;transform:scaleX(0.8823);">Searcher</span>
<svg class="b" style="left:850.00px;top:55.00px;" width="30" height="30" viewBox="0 0 30 30"><defs><radialGradient id="gGl" cx="0.38" cy="0.3" r="0.75"><stop offset="0" stop-color="#6fb2ff"/><stop offset="0.55" stop-color="#2a72dc"/><stop offset="1" stop-color="#173f9c"/></radialGradient><clipPath id="cGl"><circle cx="14.3" cy="15" r="11.2"/></clipPath></defs><circle cx="14.3" cy="15" r="11.2" fill="url(#gGl)"/><g clip-path="url(#cGl)" fill="#4fb340"><path d="M4 9.5c2-3.5 6-5.800 9.500-5.600 1.600 1.300-0.500 3-2.300 3.300-1.200 1.700-0.400 3.700-2.700 4.500-1.800 0.500-3.300-0.400-4.500-2.200z"/><path d="M5.600 17.200c2.300-0.700 5.300 0.300 7.400 1.700 2 1.300 2.600 3.400 1.300 5.300-1.200 1.500-3.600 1.600-5.700 0.400-2.200-1.600-3.600-4.500-3-7.400z"/><path d="M19 5.500c2.400 0 5 2 6.200 4.400-1.600 0.800-3.400 0.500-4.600-0.600-1.200-1.100-2.100-2.400-1.600-3.800z"/><path d="M21.800 13.600c1.700-0.900 3.500-0.600 4.400 0.700 0.400 2.500-0.500 5-2.200 6.600-1.700-1-2.900-3-2.900-4.900 0-1 0.200-1.800 0.700-2.400z"/></g><circle cx="14.3" cy="15" r="11.2" fill="none" stroke="#1c4aa6" stroke-width="0.6"/></svg>
<span class="t" style="left:853.90px;top:86.20px;font-size:10.67px;line-height:14px;color:#1e1e1e;transform:scaleX(0.9476);">Web</span>
<span class="t" style="left:847.15px;top:101.00px;font-size:10.67px;line-height:14px;color:#1e1e1e;transform:scaleX(0.9744);">Lookup</span>
<div class="b" style="left:896.00px;top:53.80px;width:49.00px;height:62.40px;background:linear-gradient(#fbe0ac 0%,#fbd594 36%,#fdbe49 37.5%,#fdd06a 65%,#fee68b 100%);border:1px solid #c9a868;border-radius:2px;box-sizing:border-box;"></div>
<svg class="b" style="left:906.00px;top:56.00px;" width="30" height="28" viewBox="0 0 30 28"><rect x="17" y="2.800" width="4" height="6" fill="#3f5078"/><path d="M2.600 14.200L15 2.800l12.400 11.400" fill="none" stroke="#4e5e86" stroke-width="3.2" stroke-linejoin="miter"/><path d="M2.600 14.200L15 2.800l12.400 11.400" fill="none" stroke="#fff" stroke-width="1.1"/><path d="M6.600 13v13.400h6.200v-8h4.400v8h6.200v-13.400l-8.400-7.600z" fill="#f7f8fb" stroke="#4e5e86" stroke-width="1.3"/></svg>
<span class="t" style="left:897.60px;top:86.20px;font-size:10.67px;line-height:14px;color:#1e1e1e;transform:scaleX(0.9045);">Start Page</span>
<svg class="b" style="left:960.00px;top:55.00px;" width="28" height="30" viewBox="0 0 28 30"><rect x="2.300" y="4.200" width="20.800" height="20.800" rx="1.600" fill="#f1c368" stroke="#b98a2c" stroke-width="0.900"/><rect x="3.500" y="5.400" width="18.400" height="18.400" rx="1" fill="#f8d893"/><path d="M8.300 5.800v-2h2.600a1.800 1.800 0 0 1 3.600 0h2.600v2z" fill="#dfe2ea" stroke="#7a8094" stroke-width="0.800"/><path d="M10.300 11.500h9.600l4.900 4.800v11.200h-14.500z" fill="#fbfbfd" stroke="#9aa0b2" stroke-width="0.900"/><path d="M19.900 11.500v4.800h4.900" fill="#e6e8ef" stroke="#9aa0b2" stroke-width="0.800"/><path d="M12.300 16h5.600M12.300 18.200h10M12.300 20.400h10M12.300 22.600h10M12.300 24.800h10" stroke="#d5d8e2" stroke-width="0.800"/></svg>
<span class="t" style="left:962.55px;top:86.20px;font-size:10.67px;line-height:14px;color:#1e1e1e;transform:scaleX(0.8538);">Paste</span>
<svg class="b" style="left:971.00px;top:107.00px;" width="7" height="4" viewBox="0 0 7 4"><path d="M0.5 0.5h5l-2.5 3z" fill="#333"/></svg>
<svg class="b" style="left:993.00px;top:56.00px;" width="15" height="15" viewBox="0 0 15 15"><path d="M4.200 1.800l5.300 8.400M10.800 1.800l-5.300 8.400" stroke="#6f7890" stroke-width="1.300" fill="none"/><circle cx="4.600" cy="11.400" r="2" fill="none" stroke="#2f63d6" stroke-width="1.500"/><circle cx="10.400" cy="11.400" r="2" fill="none" stroke="#2f63d6" stroke-width="1.500"/></svg>
<span class="t" style="left:1008.80px;top:56.50px;font-size:10.67px;line-height:14px;color:#1e1e1e;transform:scaleX(0.9221);">Cut</span>
<svg class="b" style="left:993.00px;top:75.00px;" width="15" height="15" viewBox="0 0 15 15"><path d="M1.500 1.600h5l2.200 2.200v6.800h-7.200z" fill="#f4f6fc" stroke="#7f8fbe" stroke-width="0.900"/><path d="M3 4.600h3.600M3 6.600h4.200M3 8.600h4.200" stroke="#9fb0e0" stroke-width="0.800"/><path d="M6 5.200h5l2.300 2.300v6.800h-7.300z" fill="#e4ebfb" stroke="#7f8fbe" stroke-width="0.900"/><path d="M7.600 8.800h3.400M7.600 10.600h4.200M7.600 12.400h4.200" stroke="#8fa4e0" stroke-width="0.800"/></svg>
<span class="t" style="left:1008.80px;top:75.60px;font-size:10.67px;line-height:14px;color:#1e1e1e;transform:scaleX(0.9713);">Copy</span>
<svg class="b" style="left:993.00px;top:94.00px;" width="15" height="15" viewBox="0 0 15 15"><path d="M2 2.600c3.600 2.800 6.800 6.400 10 10.800" stroke="#e02018" stroke-width="2.300" fill="none" stroke-linecap="round"/><path d="M13 1.600c-4.200 3-7.600 6.800-10.600 11.600" stroke="#e02018" stroke-width="2" fill="none" stroke-linecap="round"/></svg>
<span class="t" style="left:1009.30px;top:95.00px;font-size:10.67px;line-height:14px;color:#1e1e1e;transform:scaleX(0.9177);">Delete</span>
<svg class="b" style="left:1057.00px;top:57.00px;" width="15" height="13" viewBox="0 0 15 13"><path d="M5 1.400L1.600 4.800 5 8.200M1.800 4.800h7.200a3.300 3.300 0 0 1 0 6.600h-4.600" stroke="#a9acb3" stroke-width="1.400" fill="none"/></svg>
<span class="t" style="left:1072.70px;top:56.50px;font-size:10.67px;line-height:14px;color:#a6a9b0;transform:scaleX(0.9607);">Undo</span>
<svg class="b" style="left:1057.00px;top:76.00px;" width="15" height="13" viewBox="0 0 15 13"><path d="M9.400 1.400l3.400 3.400-3.400 3.400M12.600 4.800h-7.200a3.300 3.300 0 0 0 0 6.600h4.600" stroke="#a9acb3" stroke-width="1.400" fill="none"/></svg>
<span class="t" style="left:1072.70px;top:75.60px;font-size:10.67px;line-height:14px;color:#a6a9b0;transform:scaleX(0.8980);">Redo</span>
<svg class="b" style="left:1117.00px;top:57.00px;" width="29" height="27" viewBox="0 0 29 27"><path d="M2.200 3.300h12v-1.400h12.400v10.400h-24.400z" fill="#f7f8fb" stroke="#7f8aa8" stroke-width="1.100"/><path d="M15.800 4.600h9.400" stroke="#b9c0d2" stroke-width="1.600"/><path d="M2.200 15.900h12v-1.400h12.400v10.400h-24.400z" fill="#f7f8fb" stroke="#7f8aa8" stroke-width="1.100"/><path d="M15.800 17.200h9.400" stroke="#b9c0d2" stroke-width="1.600"/></svg>
<span class="t" style="left:1116.60px;top:86.20px;font-size:10.67px;line-height:14px;color:#1e1e1e;transform:scaleX(0.9844);">Group</span>
<svg class="b" style="left:1128.00px;top:106.50px;" width="7" height="4" viewBox="0 0 7 4"><path d="M0.5 0.5h5l-2.5 3z" fill="#333"/></svg>
<svg class="b" style="left:1150.00px;top:56.00px;" width="15" height="15" viewBox="0 0 15 15"><path d="M1.500 2.600h4v-1.200h8v4.400h-12z" fill="#f7f8fb" stroke="#7f8aa8" stroke-width="0.900"/><rect x="5.400" y="5.800" width="6" height="8" fill="#c6c9d2" stroke="#7f8aa8" stroke-width="0.900"/><rect x="6.600" y="8.600" width="3.600" height="4" fill="#8d92a0"/></svg>
<span class="t" style="left:1166.30px;top:56.50px;font-size:10.67px;line-height:14px;color:#1e1e1e;transform:scaleX(0.8971);">Tab List</span>
<svg class="b" style="left:1203.00px;top:62.00px;" width="6" height="4" viewBox="0 0 6 4"><path d="M0.3 0.5h4.6l-2.3 2.6z" fill="#333"/></svg>
<svg class="b" style="left:1150.00px;top:75.00px;" width="15" height="15" viewBox="0 0 15 15"><path d="M2.400 7.600l5.600-5v2.800h5.200v4.400h-5.200v2.800z" fill="#1212ee" stroke="#0a0aa8" stroke-width="0.600"/></svg>
<span class="t" style="left:1166.30px;top:75.60px;font-size:10.67px;line-height:14px;color:#1e1e1e;transform:scaleX(0.9203);">Previous</span>
<svg class="b" style="left:1150.00px;top:94.00px;" width="15" height="15" viewBox="0 0 15 15"><path d="M13.200 7.600l-5.600-5v2.800h-5.200v4.400h5.200v2.800z" fill="#1212ee" stroke="#0a0aa8" stroke-width="0.600"/></svg>
<span class="t" style="left:1166.30px;top:95.00px;font-size:10.67px;line-height:14px;color:#1e1e1e;transform:scaleX(0.9304);">Next</span>
<svg class="b" style="left:1217.00px;top:56.00px;" width="15" height="15" viewBox="0 0 15 15"><path d="M1.500 2.400h7v-1h4.800v11.800h-11.800z" fill="#f7f8fb" stroke="#7f8aa8" stroke-width="0.900"/><path d="M8.800 1.600l3.200 3.200M12 1.600l-3.200 3.200" stroke="#ee1111" stroke-width="1.300"/></svg>
<span class="t" style="left:1232.60px;top:56.50px;font-size:10.67px;line-height:14px;color:#1e1e1e;transform:scaleX(0.9161);">Close</span>
<svg class="b" style="left:1217.00px;top:75.00px;" width="15" height="15" viewBox="0 0 15 15"><path d="M1.500 4.600h11.800v8.600h-11.800z" fill="#f7f8fb" stroke="#7f8aa8" stroke-width="0.900"/><path d="M1.500 1.400h11.800v3.200h-11.800z" fill="#fbeeee" stroke="#7f8aa8" stroke-width="0.900"/><path d="M2.400 1.600l3 3M5.400 1.600l-3 3M8.200 1.600l3 3M11.200 1.600l-3 3" stroke="#ee1111" stroke-width="1.200"/></svg>
<span class="t" style="left:1232.60px;top:75.60px;font-size:10.67px;line-height:14px;color:#1e1e1e;transform:scaleX(0.9565);">Close All</span>
<div class="b" style="left:7.00px;top:133.50px;width:1298.00px;height:620.50px;background:#f0f0f0;"></div>
<div class="b" style="left:7.00px;top:133.50px;width:1028.00px;height:18.50px;background:#c1c5d0;"></div>
<div class="b" style="left:7.50px;top:133.50px;width:103.50px;height:18.50px;background:#eeeeee;"></div>
<svg class="b" style="left:17.00px;top:135.00px;" width="15" height="15" viewBox="0 0 15 15"><rect x="9.200" y="1.600" width="1.800" height="3" fill="#6d7ea6"/><path d="M1.400 8L7.300 2.400l5.900 5.600" fill="none" stroke="#6d7ea6" stroke-width="1.500"/><path d="M3.200 7.600v6h2.900v-3.600h2.400v3.600h2.900v-6l-4.100-3.700z" fill="#f7f8fb" stroke="#6d7ea6" stroke-width="1"/></svg>
<span class="t" style="left:36.70px;top:136.80px;font-size:10.86px;line-height:14px;color:#333;transform:scaleX(0.8844);">Start Page</span>
<div class="b" style="left:88.00px;top:137.80px;width:12.20px;height:11.80px;background:#bcbcbc;border-radius:2px;"></div>
<svg class="b" style="left:88.00px;top:137.80px;" width="12.2" height="11.8" viewBox="0 0 12.2 11.8"><path d="M3.6 3.4l5 5M8.6 3.4l-5 5" stroke="#f4f4f4" stroke-width="1.5" fill="none"/></svg>
<div class="b" style="left:111.00px;top:133.50px;width:89.00px;height:18.50px;background:#ffffff;"></div>
<svg class="b" style="left:123.00px;top:135.00px;" width="13" height="16" viewBox="0 0 13 16"><path d="M1.300 1.300h6.400l3.700 3.700v8.600h-10.100z" fill="#3e5274" stroke="#7080a8" stroke-width="1.100"/><path d="M7.700 1.300v3.700h3.700z" fill="#8c9bc0"/><rect x="2.900" y="2.600" width="3.600" height="1.500" fill="#e9edf6"/><path d="M3.200 6.600h6.200M3.200 8.900h6.200M3.200 11.200h6.200" stroke="#46a558" stroke-width="1.100"/><path d="M6.300 5.800v6.200" stroke="#2f7a40" stroke-width="0.600"/></svg>
<span class="t" style="left:138.90px;top:136.40px;font-size:11.06px;line-height:14px;color:#111;transform:scaleX(0.9097);font-weight:bold;">Library</span>
<div class="b" style="left:176.20px;top:137.20px;width:12.20px;height:12.00px;background:#e8714f;border-radius:2.5px;"></div>
<svg class="b" style="left:176.20px;top:137.20px;" width="12.2" height="12" viewBox="0 0 12.2 12"><path d="M3.5 3.4l5.2 5.2M8.700 3.400l-5.200 5.200" stroke="#fff" stroke-width="1.900" fill="none"/></svg>
<div class="b" style="left:1039.00px;top:133.50px;width:1.00px;height:620.50px;background:#b4b8c2;"></div>
<div class="b" style="left:23.50px;top:186.50px;width:993.00px;height:550.50px;background:#fff;border:1px solid #e2e2e2;box-sizing:border-box;"></div>
<div class="b" style="left:66.50px;top:169.50px;width:127.50px;height:17.50px;background:#f0f0f0;border:1px solid #dcdcdc;border-bottom:none;box-sizing:border-box;"></div>
<div class="b" style="left:134.00px;top:169.50px;width:1.00px;height:17.50px;background:#dcdcdc;"></div>
<div class="b" style="left:23.50px;top:168.00px;width:43.00px;height:20.00px;background:#fff;border:1px solid #e2e2e2;border-bottom:none;box-sizing:border-box;"></div>
<span class="t" style="left:33.70px;top:171.40px;font-size:10.86px;line-height:14px;color:#222;transform:scaleX(0.8475);">Parts</span>
<span class="t" style="left:76.60px;top:172.20px;font-size:10.86px;line-height:14px;color:#222;transform:scaleX(0.9851);">Footprints</span>
<span class="t" style="left:145.10px;top:172.20px;font-size:10.86px;line-height:14px;color:#222;transform:scaleX(0.9409);">Symbols</span>
<div class="b" style="left:31.50px;top:195.00px;width:976.50px;height:532.50px;background:#fff;border:1px solid #9a9a9a;box-sizing:border-box;"></div>
<div class="b" style="left:48.50px;top:196.00px;width:181.00px;height:18.30px;background:#d5e7f8;"></div>
<span class="t" style="left:115.45px;top:198.60px;font-size:11.06px;line-height:14px;color:#222;transform:scaleX(0.8986);">Part Name</span>
<span class="t" style="left:244.25px;top:198.60px;font-size:11.06px;line-height:14px;color:#222;transform:scaleX(0.8805);">Part Type</span>
<span class="t" style="left:416.00px;top:198.60px;font-size:11.06px;line-height:14px;color:#222;transform:scaleX(0.9400);">Description</span>
<span class="t" style="left:614.55px;top:198.60px;font-size:11.06px;line-height:14px;color:#222;transform:scaleX(0.8529);">Part Class</span>
<span class="t" style="left:702.25px;top:198.60px;font-size:11.06px;line-height:14px;color:#222;transform:scaleX(0.9034);">Reference Designator Prefix</span>
<span class="t" style="left:944.40px;top:198.60px;font-size:11.06px;line-height:14px;color:#222;transform:scaleX(0.9805);">Footprint</span>
<span class="t" style="left:51.40px;top:217.00px;font-size:11.06px;line-height:14px;color:#c9c9c9;transform:scaleX(0.9203);">&lt;Filter&gt;</span>
<span class="t" style="left:232.90px;top:217.00px;font-size:11.06px;line-height:14px;color:#c9c9c9;transform:scaleX(0.9203);">&lt;Filter&gt;</span>
<span class="t" style="left:302.60px;top:217.00px;font-size:11.06px;line-height:14px;color:#c9c9c9;transform:scaleX(0.9203);">&lt;Filter&gt;</span>
<span class="t" style="left:586.60px;top:217.00px;font-size:11.06px;line-height:14px;color:#c9c9c9;transform:scaleX(0.9203);">&lt;Filter&gt;</span>
<span class="t" style="left:691.60px;top:217.00px;font-size:11.06px;line-height:14px;color:#c9c9c9;transform:scaleX(0.9203);">&lt;Filter&gt;</span>
<span class="t" style="left:844.10px;top:217.00px;font-size:11.06px;line-height:14px;color:#c9c9c9;transform:scaleX(0.9203);">&lt;Filter&gt;</span>
<div class="b" style="left:841.20px;top:234.00px;width:151.30px;height:478.00px;background:#d2d2d2;"></div>
<div class="b" style="left:32.50px;top:511.00px;width:16.00px;height:19.00px;background:#d9e9f8;"></div>
<div class="b" style="left:48.50px;top:511.00px;width:181.00px;height:19.00px;background:#a7cef0;"></div>
<svg class="b" style="left:38.50px;top:516.30px;" width="5" height="8" viewBox="0 0 5 8"><path d="M0.4 0.5v6.6l3.9-3.3z" fill="#111"/></svg>
<div class="b" style="left:48.50px;top:253.00px;width:792.70px;height:1.00px;background:#ebebeb;"></div>
<div class="b" style="left:841.20px;top:253.00px;width:151.30px;height:1.00px;background:#e3e3e3;"></div>
<div class="b" style="left:48.50px;top:273.00px;width:792.70px;height:1.00px;background:#ebebeb;"></div>
<div class="b" style="left:841.20px;top:273.00px;width:151.30px;height:1.00px;background:#e3e3e3;"></div>
<div class="b" style="left:48.50px;top:292.00px;width:792.70px;height:1.00px;background:#ebebeb;"></div>
<div class="b" style="left:841.20px;top:292.00px;width:151.30px;height:1.00px;background:#e3e3e3;"></div>
<div class="b" style="left:48.50px;top:312.00px;width:792.70px;height:1.00px;background:#ebebeb;"></div>
<div class="b" style="left:841.20px;top:312.00px;width:151.30px;height:1.00px;background:#e3e3e3;"></div>
<div class="b" style="left:48.50px;top:332.00px;width:792.70px;height:1.00px;background:#ebebeb;"></div>
<div class="b" style="left:841.20px;top:332.00px;width:151.30px;height:1.00px;background:#e3e3e3;"></div>
<div class="b" style="left:48.50px;top:352.00px;width:792.70px;height:1.00px;background:#ebebeb;"></div>
<div class="b" style="left:841.20px;top:352.00px;width:151.30px;height:1.00px;background:#e3e3e3;"></div>
<div class="b" style="left:48.50px;top:372.00px;width:792.70px;height:1.00px;background:#ebebeb;"></div>
<div class="b" style="left:841.20px;top:372.00px;width:151.30px;height:1.00px;background:#e3e3e3;"></div>
<div class="b" style="left:48.50px;top:391.00px;width:792.70px;height:1.00px;background:#ebebeb;"></div>
<div class="b" style="left:841.20px;top:391.00px;width:151.30px;height:1.00px;background:#e3e3e3;"></div>
<div class="b" style="left:48.50px;top:411.00px;width:792.70px;height:1.00px;background:#ebebeb;"></div>
<div class="b" style="left:841.20px;top:411.00px;width:151.30px;height:1.00px;background:#e3e3e3;"></div>
<div class="b" style="left:48.50px;top:431.00px;width:792.70px;height:1.00px;background:#ebebeb;"></div>
<div class="b" style="left:841.20px;top:431.00px;width:151.30px;height:1.00px;background:#e3e3e3;"></div>
<div class="b" style="left:48.50px;top:451.00px;width:792.70px;height:1.00px;background:#ebebeb;"></div>
<div class="b" style="left:841.20px;top:451.00px;width:151.30px;height:1.00px;background:#e3e3e3;"></div>
<div class="b" style="left:48.50px;top:470.00px;width:792.70px;height:1.00px;background:#ebebeb;"></div>
<div class="b" style="left:841.20px;top:470.00px;width:151.30px;height:1.00px;background:#e3e3e3;"></div>
<div class="b" style="left:48.50px;top:490.00px;width:792.70px;height:1.00px;background:#ebebeb;"></div>
<div class="b" style="left:841.20px;top:490.00px;width:151.30px;height:1.00px;background:#e3e3e3;"></div>
<div class="b" style="left:48.50px;top:510.00px;width:792.70px;height:1.00px;background:#ebebeb;"></div>
<div class="b" style="left:841.20px;top:510.00px;width:151.30px;height:1.00px;background:#e3e3e3;"></div>
<div class="b" style="left:48.50px;top:530.00px;width:792.70px;height:1.00px;background:#ebebeb;"></div>
<div class="b" style="left:841.20px;top:530.00px;width:151.30px;height:1.00px;background:#e3e3e3;"></div>
<div class="b" style="left:48.50px;top:550.00px;width:792.70px;height:1.00px;background:#ebebeb;"></div>
<div class="b" style="left:841.20px;top:550.00px;width:151.30px;height:1.00px;background:#e3e3e3;"></div>
<div class="b" style="left:48.50px;top:569.00px;width:792.70px;height:1.00px;background:#ebebeb;"></div>
<div class="b" style="left:841.20px;top:569.00px;width:151.30px;height:1.00px;background:#e3e3e3;"></div>
<div class="b" style="left:48.50px;top:589.00px;width:792.70px;height:1.00px;background:#ebebeb;"></div>
<div class="b" style="left:841.20px;top:589.00px;width:151.30px;height:1.00px;background:#e3e3e3;"></div>
<div class="b" style="left:48.50px;top:609.00px;width:792.70px;height:1.00px;background:#ebebeb;"></div>
<div class="b" style="left:841.20px;top:609.00px;width:151.30px;height:1.00px;background:#e3e3e3;"></div>
<div class="b" style="left:48.50px;top:629.00px;width:792.70px;height:1.00px;background:#ebebeb;"></div>
<div class="b" style="left:841.20px;top:629.00px;width:151.30px;height:1.00px;background:#e3e3e3;"></div>
<div class="b" style="left:48.50px;top:649.00px;width:792.70px;height:1.00px;background:#ebebeb;"></div>
<div class="b" style="left:841.20px;top:649.00px;width:151.30px;height:1.00px;background:#e3e3e3;"></div>
<div class="b" style="left:48.50px;top:668.00px;width:792.70px;height:1.00px;background:#ebebeb;"></div>
<div class="b" style="left:841.20px;top:668.00px;width:151.30px;height:1.00px;background:#e3e3e3;"></div>
<div class="b" style="left:48.50px;top:688.00px;width:792.70px;height:1.00px;background:#ebebeb;"></div>
<div class="b" style="left:841.20px;top:688.00px;width:151.30px;height:1.00px;background:#e3e3e3;"></div>
<div class="b" style="left:48.50px;top:708.00px;width:792.70px;height:1.00px;background:#ebebeb;"></div>
<div class="b" style="left:841.20px;top:708.00px;width:151.30px;height:1.00px;background:#e3e3e3;"></div>
<div class="b" style="left:48.00px;top:196.00px;width:1.00px;height:516.00px;background:#ececec;"></div>
<div class="b" style="left:299.00px;top:196.00px;width:1.00px;height:516.00px;background:#e6e6e6;"></div>
<div class="b" style="left:583.00px;top:196.00px;width:1.00px;height:516.00px;background:#e6e6e6;"></div>
<div class="b" style="left:688.00px;top:196.00px;width:1.00px;height:516.00px;background:#e6e6e6;"></div>
<div class="b" style="left:840.00px;top:196.00px;width:1.00px;height:516.00px;background:#e6e6e6;"></div>
<div class="b" style="left:229.00px;top:196.00px;width:1.00px;height:18.00px;background:#e6e6e6;"></div>
<div class="b" style="left:229.00px;top:214.50px;width:1.00px;height:497.50px;background:#7e7e7e;"></div>
<div class="b" style="left:48.50px;top:233.00px;width:944.00px;height:1.00px;background:#858585;"></div>
<div class="b" style="left:48.00px;top:236.39px;width:181.00px;height:14px;overflow:hidden;"><span class="t" style="left:2.90px;top:-0.20px;font-size:11.06px;line-height:14px;color:#1a1a1a;transform:scaleX(0.9045);">04023C104KAT2A</span></div>
<div class="b" style="left:229.50px;top:236.39px;width:69.20px;height:14px;overflow:hidden;"><span class="t" style="left:2.90px;top:-0.20px;font-size:11.06px;line-height:14px;color:#1a1a1a;transform:scaleX(0.9073);">General</span></div>
<div class="b" style="left:299.20px;top:236.39px;width:283.50px;height:14px;overflow:hidden;"><span class="t" style="left:2.90px;top:-0.20px;font-size:11.06px;line-height:14px;color:#1a1a1a;transform:scaleX(0.9059);">Capacitor X7R Dielectric, 04023C104KAT2A, 0.1uF</span></div>
<div class="b" style="left:583.20px;top:236.39px;width:104.50px;height:14px;overflow:hidden;"><span class="t" style="left:2.90px;top:-0.20px;font-size:11.06px;line-height:14px;color:#1a1a1a;transform:scaleX(0.9332);">Capacitor</span></div>
<div class="b" style="left:688.20px;top:236.39px;width:152.00px;height:14px;overflow:hidden;"><span class="t" style="left:2.90px;top:-0.20px;font-size:11.06px;line-height:14px;color:#1a1a1a;transform:scaleX(0.8149);">C</span></div>
<div class="b" style="left:840.70px;top:236.39px;width:151.30px;height:14px;overflow:hidden;"><span class="t" style="left:2.90px;top:-0.20px;font-size:11.06px;line-height:14px;color:#1a1a1a;transform:scaleX(0.8860);">CAPC100X50X56L25 (N)</span></div>
<div class="b" style="left:48.00px;top:256.18px;width:181.00px;height:14px;overflow:hidden;"><span class="t" style="left:2.90px;top:-0.20px;font-size:11.06px;line-height:14px;color:#1a1a1a;transform:scaleX(0.9213);">0022272061</span></div>
<div class="b" style="left:229.50px;top:256.18px;width:69.20px;height:14px;overflow:hidden;"><span class="t" style="left:2.90px;top:-0.20px;font-size:11.06px;line-height:14px;color:#1a1a1a;transform:scaleX(0.9073);">General</span></div>
<div class="b" style="left:299.20px;top:256.18px;width:283.50px;height:14px;overflow:hidden;"><span class="t" style="left:2.90px;top:-0.20px;font-size:11.06px;line-height:14px;color:#1a1a1a;transform:scaleX(0.9334);">KKR 254 Wire-to-Board Header, Vertical, with Friction Lock, 6 Circuits</span></div>
<div class="b" style="left:583.20px;top:256.18px;width:104.50px;height:14px;overflow:hidden;"><span class="t" style="left:2.90px;top:-0.20px;font-size:11.06px;line-height:14px;color:#1a1a1a;transform:scaleX(0.9462);">Connector</span></div>
<div class="b" style="left:688.20px;top:256.18px;width:152.00px;height:14px;overflow:hidden;"><span class="t" style="left:2.90px;top:-0.20px;font-size:11.06px;line-height:14px;color:#1a1a1a;transform:scaleX(0.8997);">CN</span></div>
<div class="b" style="left:840.70px;top:256.18px;width:151.30px;height:14px;overflow:hidden;"><span class="t" style="left:2.90px;top:-0.20px;font-size:11.06px;line-height:14px;color:#1a1a1a;transform:scaleX(0.8970);">MOLEX_0022272061 (N)</span></div>
<div class="b" style="left:48.00px;top:275.97px;width:181.00px;height:14px;overflow:hidden;"><span class="t" style="left:2.90px;top:-0.20px;font-size:11.06px;line-height:14px;color:#1a1a1a;transform:scaleX(0.9213);">0039301060</span></div>
<div class="b" style="left:229.50px;top:275.97px;width:69.20px;height:14px;overflow:hidden;"><span class="t" style="left:2.90px;top:-0.20px;font-size:11.06px;line-height:14px;color:#1a1a1a;transform:scaleX(0.9073);">General</span></div>
<div class="b" style="left:299.20px;top:275.97px;width:283.50px;height:14px;overflow:hidden;"><span class="t" style="left:2.90px;top:-0.20px;font-size:11.06px;line-height:14px;color:#1a1a1a;transform:scaleX(0.9348);">Mini-Fit Jr. Header, Dual Row, Right Angle, with Snap-in Plastic Peg</span></div>
<div class="b" style="left:583.20px;top:275.97px;width:104.50px;height:14px;overflow:hidden;"><span class="t" style="left:2.90px;top:-0.20px;font-size:11.06px;line-height:14px;color:#1a1a1a;transform:scaleX(0.9462);">Connector</span></div>
<div class="b" style="left:688.20px;top:275.97px;width:152.00px;height:14px;overflow:hidden;"><span class="t" style="left:2.90px;top:-0.20px;font-size:11.06px;line-height:14px;color:#1a1a1a;transform:scaleX(0.8997);">CN</span></div>
<div class="b" style="left:840.70px;top:275.97px;width:151.30px;height:14px;overflow:hidden;"><span class="t" style="left:2.90px;top:-0.20px;font-size:11.06px;line-height:14px;color:#1a1a1a;transform:scaleX(0.8970);">MOLEX_0039301060 (N)</span></div>
<div class="b" style="left:48.00px;top:295.75px;width:181.00px;height:14px;overflow:hidden;"><span class="t" style="left:2.90px;top:-0.20px;font-size:11.06px;line-height:14px;color:#1a1a1a;transform:scaleX(0.9213);">0436500213</span></div>
<div class="b" style="left:229.50px;top:295.75px;width:69.20px;height:14px;overflow:hidden;"><span class="t" style="left:2.90px;top:-0.20px;font-size:11.06px;line-height:14px;color:#1a1a1a;transform:scaleX(0.9073);">General</span></div>
<div class="b" style="left:299.20px;top:295.75px;width:283.50px;height:14px;overflow:hidden;"><span class="t" style="left:2.90px;top:-0.20px;font-size:11.06px;line-height:14px;color:#1a1a1a;transform:scaleX(0.9366);">Micro-Fit 3.0TM Right Angle Header, 3.00mm Pitch, Single Row</span></div>
<div class="b" style="left:583.20px;top:295.75px;width:104.50px;height:14px;overflow:hidden;"><span class="t" style="left:2.90px;top:-0.20px;font-size:11.06px;line-height:14px;color:#1a1a1a;transform:scaleX(0.9462);">Connector</span></div>
<div class="b" style="left:688.20px;top:295.75px;width:152.00px;height:14px;overflow:hidden;"><span class="t" style="left:2.90px;top:-0.20px;font-size:11.06px;line-height:14px;color:#1a1a1a;transform:scaleX(0.8997);">CN</span></div>
<div class="b" style="left:840.70px;top:295.75px;width:151.30px;height:14px;overflow:hidden;"><span class="t" style="left:2.90px;top:-0.20px;font-size:11.06px;line-height:14px;color:#1a1a1a;transform:scaleX(0.8970);">MOLEX_0436500213 (N)</span></div>
<div class="b" style="left:48.00px;top:315.54px;width:181.00px;height:14px;overflow:hidden;"><span class="t" style="left:2.90px;top:-0.20px;font-size:11.06px;line-height:14px;color:#1a1a1a;transform:scaleX(0.9010);">ABS07-32.768kHz</span></div>
<div class="b" style="left:229.50px;top:315.54px;width:69.20px;height:14px;overflow:hidden;"><span class="t" style="left:2.90px;top:-0.20px;font-size:11.06px;line-height:14px;color:#1a1a1a;transform:scaleX(0.9073);">General</span></div>
<div class="b" style="left:299.20px;top:315.54px;width:283.50px;height:14px;overflow:hidden;"><span class="t" style="left:2.90px;top:-0.20px;font-size:11.06px;line-height:14px;color:#1a1a1a;transform:scaleX(0.9180);">32.768kHz SMD Low Profile Crystal</span></div>
<div class="b" style="left:583.20px;top:315.54px;width:104.50px;height:14px;overflow:hidden;"><span class="t" style="left:2.90px;top:-0.20px;font-size:11.06px;line-height:14px;color:#1a1a1a;transform:scaleX(0.9052);">Crystal</span></div>
<div class="b" style="left:688.20px;top:315.54px;width:152.00px;height:14px;overflow:hidden;"><span class="t" style="left:2.90px;top:-0.20px;font-size:11.06px;line-height:14px;color:#1a1a1a;transform:scaleX(0.8406);">X</span></div>
<div class="b" style="left:840.70px;top:315.54px;width:151.30px;height:14px;overflow:hidden;"><span class="t" style="left:2.90px;top:-0.20px;font-size:11.06px;line-height:14px;color:#1a1a1a;transform:scaleX(0.8972);">XTAL320X150X90L60X150 (N)</span></div>
<div class="b" style="left:48.00px;top:335.32px;width:181.00px;height:14px;overflow:hidden;"><span class="t" style="left:2.90px;top:-0.20px;font-size:11.06px;line-height:14px;color:#1a1a1a;transform:scaleX(0.9343);">AH316M245001</span></div>
<div class="b" style="left:229.50px;top:335.32px;width:69.20px;height:14px;overflow:hidden;"><span class="t" style="left:2.90px;top:-0.20px;font-size:11.06px;line-height:14px;color:#1a1a1a;transform:scaleX(0.9073);">General</span></div>
<div class="b" style="left:299.20px;top:335.32px;width:283.50px;height:14px;overflow:hidden;"><span class="t" style="left:2.90px;top:-0.20px;font-size:11.06px;line-height:14px;color:#1a1a1a;transform:scaleX(0.9483);">Chip Antenna Mono Pole 2400-2500 MHz</span></div>
<div class="b" style="left:583.20px;top:335.32px;width:104.50px;height:14px;overflow:hidden;"><span class="t" style="left:2.90px;top:-0.20px;font-size:11.06px;line-height:14px;color:#1a1a1a;transform:scaleX(0.9467);">Antenna</span></div>
<div class="b" style="left:688.20px;top:335.32px;width:152.00px;height:14px;overflow:hidden;"><span class="t" style="left:2.90px;top:-0.20px;font-size:11.06px;line-height:14px;color:#1a1a1a;transform:scaleX(0.7209);">E</span></div>
<div class="b" style="left:840.70px;top:335.32px;width:151.30px;height:14px;overflow:hidden;"><span class="t" style="left:2.90px;top:-0.20px;font-size:11.06px;line-height:14px;color:#1a1a1a;transform:scaleX(0.8993);">ANTC320X160X50L50 (N)</span></div>
<div class="b" style="left:48.00px;top:355.11px;width:181.00px;height:14px;overflow:hidden;"><span class="t" style="left:2.90px;top:-0.20px;font-size:11.06px;line-height:14px;color:#1a1a1a;transform:scaleX(0.8974);">B3S-1000</span></div>
<div class="b" style="left:229.50px;top:355.11px;width:69.20px;height:14px;overflow:hidden;"><span class="t" style="left:2.90px;top:-0.20px;font-size:11.06px;line-height:14px;color:#1a1a1a;transform:scaleX(0.9073);">General</span></div>
<div class="b" style="left:299.20px;top:355.11px;width:283.50px;height:14px;overflow:hidden;"><span class="t" style="left:2.90px;top:-0.20px;font-size:11.06px;line-height:14px;color:#1a1a1a;transform:scaleX(0.9024);">B3S Sealed Tactile Switch (SMT)</span></div>
<div class="b" style="left:583.20px;top:355.11px;width:104.50px;height:14px;overflow:hidden;"><span class="t" style="left:2.90px;top:-0.20px;font-size:11.06px;line-height:14px;color:#1a1a1a;transform:scaleX(0.9228);">Switch</span></div>
<div class="b" style="left:688.20px;top:355.11px;width:152.00px;height:14px;overflow:hidden;"><span class="t" style="left:2.90px;top:-0.20px;font-size:11.06px;line-height:14px;color:#1a1a1a;transform:scaleX(0.8644);">SW</span></div>
<div class="b" style="left:840.70px;top:355.11px;width:151.30px;height:14px;overflow:hidden;"><span class="t" style="left:2.90px;top:-0.20px;font-size:11.06px;line-height:14px;color:#1a1a1a;transform:scaleX(0.8844);">SW_B3S-1000 (N)</span></div>
<div class="b" style="left:48.00px;top:374.89px;width:181.00px;height:14px;overflow:hidden;"><span class="t" style="left:2.90px;top:-0.20px;font-size:11.06px;line-height:14px;color:#1a1a1a;transform:scaleX(0.8868);">C1005X5R1A104K</span></div>
<div class="b" style="left:229.50px;top:374.89px;width:69.20px;height:14px;overflow:hidden;"><span class="t" style="left:2.90px;top:-0.20px;font-size:11.06px;line-height:14px;color:#1a1a1a;transform:scaleX(0.9073);">General</span></div>
<div class="b" style="left:299.20px;top:374.89px;width:283.50px;height:14px;overflow:hidden;"><span class="t" style="left:2.90px;top:-0.20px;font-size:11.06px;line-height:14px;color:#1a1a1a;transform:scaleX(0.8681);">MULTILAYER CERAMIC CHIP CAPACITORS , 100nF</span></div>
<div class="b" style="left:583.20px;top:374.89px;width:104.50px;height:14px;overflow:hidden;"><span class="t" style="left:2.90px;top:-0.20px;font-size:11.06px;line-height:14px;color:#1a1a1a;transform:scaleX(0.9332);">Capacitor</span></div>
<div class="b" style="left:688.20px;top:374.89px;width:152.00px;height:14px;overflow:hidden;"><span class="t" style="left:2.90px;top:-0.20px;font-size:11.06px;line-height:14px;color:#1a1a1a;transform:scaleX(0.8149);">C</span></div>
<div class="b" style="left:840.70px;top:374.89px;width:151.30px;height:14px;overflow:hidden;"><span class="t" style="left:2.90px;top:-0.20px;font-size:11.06px;line-height:14px;color:#1a1a1a;transform:scaleX(0.8860);">CAPC100X50X55L10 (N)</span></div>
<div class="b" style="left:48.00px;top:394.68px;width:181.00px;height:14px;overflow:hidden;"><span class="t" style="left:2.90px;top:-0.20px;font-size:11.06px;line-height:14px;color:#1a1a1a;transform:scaleX(0.8622);">CBR04C609B1GAC</span></div>
<div class="b" style="left:229.50px;top:394.68px;width:69.20px;height:14px;overflow:hidden;"><span class="t" style="left:2.90px;top:-0.20px;font-size:11.06px;line-height:14px;color:#1a1a1a;transform:scaleX(0.9073);">General</span></div>
<div class="b" style="left:299.20px;top:394.68px;width:283.50px;height:14px;overflow:hidden;"><span class="t" style="left:2.90px;top:-0.20px;font-size:11.06px;line-height:14px;color:#1a1a1a;transform:scaleX(0.9294);">Surface Mount Multilayer Ceramic Capacitors (SMD MLCCs) for</span></div>
<div class="b" style="left:583.20px;top:394.68px;width:104.50px;height:14px;overflow:hidden;"><span class="t" style="left:2.90px;top:-0.20px;font-size:11.06px;line-height:14px;color:#1a1a1a;transform:scaleX(0.9332);">Capacitor</span></div>
<div class="b" style="left:688.20px;top:394.68px;width:152.00px;height:14px;overflow:hidden;"><span class="t" style="left:2.90px;top:-0.20px;font-size:11.06px;line-height:14px;color:#1a1a1a;transform:scaleX(0.8149);">C</span></div>
<div class="b" style="left:840.70px;top:394.68px;width:151.30px;height:14px;overflow:hidden;"><span class="t" style="left:2.90px;top:-0.20px;font-size:11.06px;line-height:14px;color:#1a1a1a;transform:scaleX(0.8860);">CAPC100X50X55L25 (N)</span></div>
<div class="b" style="left:48.00px;top:414.47px;width:181.00px;height:14px;overflow:hidden;"><span class="t" style="left:2.90px;top:-0.20px;font-size:11.06px;line-height:14px;color:#1a1a1a;transform:scaleX(0.8799);">CC0402JRNP09BN180</span></div>
<div class="b" style="left:229.50px;top:414.47px;width:69.20px;height:14px;overflow:hidden;"><span class="t" style="left:2.90px;top:-0.20px;font-size:11.06px;line-height:14px;color:#1a1a1a;transform:scaleX(0.9073);">General</span></div>
<div class="b" style="left:299.20px;top:414.47px;width:283.50px;height:14px;overflow:hidden;"><span class="t" style="left:2.90px;top:-0.20px;font-size:11.06px;line-height:14px;color:#1a1a1a;transform:scaleX(0.8719);">SURFACE-MOUNT CERAMIC MULTILAYER CAPACITORS, 18pF</span></div>
<div class="b" style="left:583.20px;top:414.47px;width:104.50px;height:14px;overflow:hidden;"><span class="t" style="left:2.90px;top:-0.20px;font-size:11.06px;line-height:14px;color:#1a1a1a;transform:scaleX(0.9332);">Capacitor</span></div>
<div class="b" style="left:688.20px;top:414.47px;width:152.00px;height:14px;overflow:hidden;"><span class="t" style="left:2.90px;top:-0.20px;font-size:11.06px;line-height:14px;color:#1a1a1a;transform:scaleX(0.8149);">C</span></div>
<div class="b" style="left:840.70px;top:414.47px;width:151.30px;height:14px;overflow:hidden;"><span class="t" style="left:2.90px;top:-0.20px;font-size:11.06px;line-height:14px;color:#1a1a1a;transform:scaleX(0.8860);">CAPC100X50X55L20 (N)</span></div>
<div class="b" style="left:48.00px;top:434.25px;width:181.00px;height:14px;overflow:hidden;"><span class="t" style="left:2.90px;top:-0.20px;font-size:11.06px;line-height:14px;color:#1a1a1a;transform:scaleX(0.8799);">CC0402JRNP09BN330</span></div>
<div class="b" style="left:229.50px;top:434.25px;width:69.20px;height:14px;overflow:hidden;"><span class="t" style="left:2.90px;top:-0.20px;font-size:11.06px;line-height:14px;color:#1a1a1a;transform:scaleX(0.9073);">General</span></div>
<div class="b" style="left:299.20px;top:434.25px;width:283.50px;height:14px;overflow:hidden;"><span class="t" style="left:2.90px;top:-0.20px;font-size:11.06px;line-height:14px;color:#1a1a1a;transform:scaleX(0.8719);">SURFACE-MOUNT CERAMIC MULTILAYER CAPACITORS, 33pF</span></div>
<div class="b" style="left:583.20px;top:434.25px;width:104.50px;height:14px;overflow:hidden;"><span class="t" style="left:2.90px;top:-0.20px;font-size:11.06px;line-height:14px;color:#1a1a1a;transform:scaleX(0.9332);">Capacitor</span></div>
<div class="b" style="left:688.20px;top:434.25px;width:152.00px;height:14px;overflow:hidden;"><span class="t" style="left:2.90px;top:-0.20px;font-size:11.06px;line-height:14px;color:#1a1a1a;transform:scaleX(0.8149);">C</span></div>
<div class="b" style="left:840.70px;top:434.25px;width:151.30px;height:14px;overflow:hidden;"><span class="t" style="left:2.90px;top:-0.20px;font-size:11.06px;line-height:14px;color:#1a1a1a;transform:scaleX(0.8860);">CAPC100X50X55L20 (N)</span></div>
<div class="b" style="left:48.00px;top:454.04px;width:181.00px;height:14px;overflow:hidden;"><span class="t" style="left:2.90px;top:-0.20px;font-size:11.06px;line-height:14px;color:#1a1a1a;transform:scaleX(0.8799);">CC0402JRNP09BN820</span></div>
<div class="b" style="left:229.50px;top:454.04px;width:69.20px;height:14px;overflow:hidden;"><span class="t" style="left:2.90px;top:-0.20px;font-size:11.06px;line-height:14px;color:#1a1a1a;transform:scaleX(0.9073);">General</span></div>
<div class="b" style="left:299.20px;top:454.04px;width:283.50px;height:14px;overflow:hidden;"><span class="t" style="left:2.90px;top:-0.20px;font-size:11.06px;line-height:14px;color:#1a1a1a;transform:scaleX(0.8719);">SURFACE-MOUNT CERAMIC MULTILAYER CAPACITORS, 82pF</span></div>
<div class="b" style="left:583.20px;top:454.04px;width:104.50px;height:14px;overflow:hidden;"><span class="t" style="left:2.90px;top:-0.20px;font-size:11.06px;line-height:14px;color:#1a1a1a;transform:scaleX(0.9332);">Capacitor</span></div>
<div class="b" style="left:688.20px;top:454.04px;width:152.00px;height:14px;overflow:hidden;"><span class="t" style="left:2.90px;top:-0.20px;font-size:11.06px;line-height:14px;color:#1a1a1a;transform:scaleX(0.8149);">C</span></div>
<div class="b" style="left:840.70px;top:454.04px;width:151.30px;height:14px;overflow:hidden;"><span class="t" style="left:2.90px;top:-0.20px;font-size:11.06px;line-height:14px;color:#1a1a1a;transform:scaleX(0.8860);">CAPC100X50X55L20 (N)</span></div>
<div class="b" style="left:48.00px;top:473.83px;width:181.00px;height:14px;overflow:hidden;"><span class="t" style="left:2.90px;top:-0.20px;font-size:11.06px;line-height:14px;color:#1a1a1a;transform:scaleX(0.8642);">CC0402KRX7R9BB152</span></div>
<div class="b" style="left:229.50px;top:473.83px;width:69.20px;height:14px;overflow:hidden;"><span class="t" style="left:2.90px;top:-0.20px;font-size:11.06px;line-height:14px;color:#1a1a1a;transform:scaleX(0.9073);">General</span></div>
<div class="b" style="left:299.20px;top:473.83px;width:283.50px;height:14px;overflow:hidden;"><span class="t" style="left:2.90px;top:-0.20px;font-size:11.06px;line-height:14px;color:#1a1a1a;transform:scaleX(0.8752);">SURFACE-MOUNT CERAMIC MULTILAYER CAPACITORS General</span></div>
<div class="b" style="left:583.20px;top:473.83px;width:104.50px;height:14px;overflow:hidden;"><span class="t" style="left:2.90px;top:-0.20px;font-size:11.06px;line-height:14px;color:#1a1a1a;transform:scaleX(0.9332);">Capacitor</span></div>
<div class="b" style="left:688.20px;top:473.83px;width:152.00px;height:14px;overflow:hidden;"><span class="t" style="left:2.90px;top:-0.20px;font-size:11.06px;line-height:14px;color:#1a1a1a;transform:scaleX(0.8149);">C</span></div>
<div class="b" style="left:840.70px;top:473.83px;width:151.30px;height:14px;overflow:hidden;"><span class="t" style="left:2.90px;top:-0.20px;font-size:11.06px;line-height:14px;color:#1a1a1a;transform:scaleX(0.8860);">CAPC100X50X55L25 (N)</span></div>
<div class="b" style="left:48.00px;top:493.61px;width:181.00px;height:14px;overflow:hidden;"><span class="t" style="left:2.90px;top:-0.20px;font-size:11.06px;line-height:14px;color:#1a1a1a;transform:scaleX(0.8642);">CC0402KRX7R9BB391</span></div>
<div class="b" style="left:229.50px;top:493.61px;width:69.20px;height:14px;overflow:hidden;"><span class="t" style="left:2.90px;top:-0.20px;font-size:11.06px;line-height:14px;color:#1a1a1a;transform:scaleX(0.9073);">General</span></div>
<div class="b" style="left:299.20px;top:493.61px;width:283.50px;height:14px;overflow:hidden;"><span class="t" style="left:2.90px;top:-0.20px;font-size:11.06px;line-height:14px;color:#1a1a1a;transform:scaleX(0.8752);">SURFACE-MOUNT CERAMIC MULTILAYER CAPACITORS General</span></div>
<div class="b" style="left:583.20px;top:493.61px;width:104.50px;height:14px;overflow:hidden;"><span class="t" style="left:2.90px;top:-0.20px;font-size:11.06px;line-height:14px;color:#1a1a1a;transform:scaleX(0.9332);">Capacitor</span></div>
<div class="b" style="left:688.20px;top:493.61px;width:152.00px;height:14px;overflow:hidden;"><span class="t" style="left:2.90px;top:-0.20px;font-size:11.06px;line-height:14px;color:#1a1a1a;transform:scaleX(0.8149);">C</span></div>
<div class="b" style="left:840.70px;top:493.61px;width:151.30px;height:14px;overflow:hidden;"><span class="t" style="left:2.90px;top:-0.20px;font-size:11.06px;line-height:14px;color:#1a1a1a;transform:scaleX(0.8860);">CAPC100X50X55L25 (N)</span></div>
<div class="b" style="left:48.00px;top:513.40px;width:181.00px;height:14px;overflow:hidden;"><span class="t" style="left:2.90px;top:-0.20px;font-size:11.06px;line-height:14px;color:#1a1a1a;transform:scaleX(0.8819);">CC3100R11MRGC</span></div>
<div class="b" style="left:229.50px;top:513.40px;width:69.20px;height:14px;overflow:hidden;"><span class="t" style="left:2.90px;top:-0.20px;font-size:11.06px;line-height:14px;color:#1a1a1a;transform:scaleX(0.9073);">General</span></div>
<div class="b" style="left:299.20px;top:513.40px;width:283.50px;height:14px;overflow:hidden;"><span class="t" style="left:2.90px;top:-0.20px;font-size:11.06px;line-height:14px;color:#1a1a1a;transform:scaleX(0.9329);">CC3100 SimpleLink Wi-FiR Network Processor, Internet-of-Things</span></div>
<div class="b" style="left:583.20px;top:513.40px;width:104.50px;height:14px;overflow:hidden;"><span class="t" style="left:2.90px;top:-0.20px;font-size:11.06px;line-height:14px;color:#1a1a1a;transform:scaleX(0.9587);">Integrated Circuit</span></div>
<div class="b" style="left:688.20px;top:513.40px;width:152.00px;height:14px;overflow:hidden;"><span class="t" style="left:2.90px;top:-0.20px;font-size:11.06px;line-height:14px;color:#1a1a1a;transform:scaleX(0.8414);">IC</span></div>
<div class="b" style="left:840.70px;top:513.40px;width:151.30px;height:14px;overflow:hidden;"><span class="t" style="left:2.90px;top:-0.20px;font-size:11.06px;line-height:14px;color:#1a1a1a;transform:scaleX(0.8936);">QFN65P50_900X900X100L40X24T730 (N)</span></div>
<div class="b" style="left:48.00px;top:533.18px;width:181.00px;height:14px;overflow:hidden;"><span class="t" style="left:2.90px;top:-0.20px;font-size:11.06px;line-height:14px;color:#1a1a1a;transform:scaleX(0.9119);">CD4093BM96</span></div>
<div class="b" style="left:229.50px;top:533.18px;width:69.20px;height:14px;overflow:hidden;"><span class="t" style="left:2.90px;top:-0.20px;font-size:11.06px;line-height:14px;color:#1a1a1a;transform:scaleX(0.9073);">General</span></div>
<div class="b" style="left:299.20px;top:533.18px;width:283.50px;height:14px;overflow:hidden;"><span class="t" style="left:2.90px;top:-0.20px;font-size:11.06px;line-height:14px;color:#1a1a1a;transform:scaleX(0.9452);">CMOS Quad 2-Input NAND Schmitt Triggers</span></div>
<div class="b" style="left:583.20px;top:533.18px;width:104.50px;height:14px;overflow:hidden;"><span class="t" style="left:2.90px;top:-0.20px;font-size:11.06px;line-height:14px;color:#1a1a1a;transform:scaleX(0.9587);">Integrated Circuit</span></div>
<div class="b" style="left:688.20px;top:533.18px;width:152.00px;height:14px;overflow:hidden;"><span class="t" style="left:2.90px;top:-0.20px;font-size:11.06px;line-height:14px;color:#1a1a1a;transform:scaleX(0.8414);">IC</span></div>
<div class="b" style="left:840.70px;top:533.18px;width:151.30px;height:14px;overflow:hidden;"><span class="t" style="left:2.90px;top:-0.20px;font-size:11.06px;line-height:14px;color:#1a1a1a;transform:scaleX(0.8874);">SOIC14P127_865X600X175L83X41 (N)</span></div>
<div class="b" style="left:48.00px;top:552.97px;width:181.00px;height:14px;overflow:hidden;"><span class="t" style="left:2.90px;top:-0.20px;font-size:11.06px;line-height:14px;color:#1a1a1a;transform:scaleX(0.9070);">CL05A475MQ5NRNC</span></div>
<div class="b" style="left:229.50px;top:552.97px;width:69.20px;height:14px;overflow:hidden;"><span class="t" style="left:2.90px;top:-0.20px;font-size:11.06px;line-height:14px;color:#1a1a1a;transform:scaleX(0.9073);">General</span></div>
<div class="b" style="left:299.20px;top:552.97px;width:283.50px;height:14px;overflow:hidden;"><span class="t" style="left:2.90px;top:-0.20px;font-size:11.06px;line-height:14px;color:#1a1a1a;transform:scaleX(0.9201);">General Multilayer Ceramic Capacitors, 4.7uF</span></div>
<div class="b" style="left:583.20px;top:552.97px;width:104.50px;height:14px;overflow:hidden;"><span class="t" style="left:2.90px;top:-0.20px;font-size:11.06px;line-height:14px;color:#1a1a1a;transform:scaleX(0.9332);">Capacitor</span></div>
<div class="b" style="left:688.20px;top:552.97px;width:152.00px;height:14px;overflow:hidden;"><span class="t" style="left:2.90px;top:-0.20px;font-size:11.06px;line-height:14px;color:#1a1a1a;transform:scaleX(0.8149);">C</span></div>
<div class="b" style="left:840.70px;top:552.97px;width:151.30px;height:14px;overflow:hidden;"><span class="t" style="left:2.90px;top:-0.20px;font-size:11.06px;line-height:14px;color:#1a1a1a;transform:scaleX(0.8860);">CAPC100X50X55L20 (N)</span></div>
<div class="b" style="left:48.00px;top:572.76px;width:181.00px;height:14px;overflow:hidden;"><span class="t" style="left:2.90px;top:-0.20px;font-size:11.06px;line-height:14px;color:#1a1a1a;transform:scaleX(0.8642);">CRCW04021K00FKED</span></div>
<div class="b" style="left:229.50px;top:572.76px;width:69.20px;height:14px;overflow:hidden;"><span class="t" style="left:2.90px;top:-0.20px;font-size:11.06px;line-height:14px;color:#1a1a1a;transform:scaleX(0.9073);">General</span></div>
<div class="b" style="left:299.20px;top:572.76px;width:283.50px;height:14px;overflow:hidden;"><span class="t" style="left:2.90px;top:-0.20px;font-size:11.06px;line-height:14px;color:#1a1a1a;transform:scaleX(0.9121);">Standard Thick Film Chip Resistors, 1K</span></div>
<div class="b" style="left:583.20px;top:572.76px;width:104.50px;height:14px;overflow:hidden;"><span class="t" style="left:2.90px;top:-0.20px;font-size:11.06px;line-height:14px;color:#1a1a1a;transform:scaleX(0.9029);">Resistor</span></div>
<div class="b" style="left:688.20px;top:572.76px;width:152.00px;height:14px;overflow:hidden;"><span class="t" style="left:2.90px;top:-0.20px;font-size:11.06px;line-height:14px;color:#1a1a1a;transform:scaleX(0.7873);">R</span></div>
<div class="b" style="left:840.70px;top:572.76px;width:151.30px;height:14px;overflow:hidden;"><span class="t" style="left:2.90px;top:-0.20px;font-size:11.06px;line-height:14px;color:#1a1a1a;transform:scaleX(0.8676);">RESC100X50X40L25_20 (N)</span></div>
<div class="b" style="left:48.00px;top:592.54px;width:181.00px;height:14px;overflow:hidden;"><span class="t" style="left:2.90px;top:-0.20px;font-size:11.06px;line-height:14px;color:#1a1a1a;transform:scaleX(0.8642);">CRCW04021K02FKED</span></div>
<div class="b" style="left:229.50px;top:592.54px;width:69.20px;height:14px;overflow:hidden;"><span class="t" style="left:2.90px;top:-0.20px;font-size:11.06px;line-height:14px;color:#1a1a1a;transform:scaleX(0.9073);">General</span></div>
<div class="b" style="left:299.20px;top:592.54px;width:283.50px;height:14px;overflow:hidden;"><span class="t" style="left:2.90px;top:-0.20px;font-size:11.06px;line-height:14px;color:#1a1a1a;transform:scaleX(0.9127);">Standard Thick Film Chip Resistors, 1K02</span></div>
<div class="b" style="left:583.20px;top:592.54px;width:104.50px;height:14px;overflow:hidden;"><span class="t" style="left:2.90px;top:-0.20px;font-size:11.06px;line-height:14px;color:#1a1a1a;transform:scaleX(0.9029);">Resistor</span></div>
<div class="b" style="left:688.20px;top:592.54px;width:152.00px;height:14px;overflow:hidden;"><span class="t" style="left:2.90px;top:-0.20px;font-size:11.06px;line-height:14px;color:#1a1a1a;transform:scaleX(0.7873);">R</span></div>
<div class="b" style="left:840.70px;top:592.54px;width:151.30px;height:14px;overflow:hidden;"><span class="t" style="left:2.90px;top:-0.20px;font-size:11.06px;line-height:14px;color:#1a1a1a;transform:scaleX(0.8676);">RESC100X50X40L25_20 (N)</span></div>
<div class="b" style="left:48.00px;top:612.33px;width:181.00px;height:14px;overflow:hidden;"><span class="t" style="left:2.90px;top:-0.20px;font-size:11.06px;line-height:14px;color:#1a1a1a;transform:scaleX(0.8613);">CRCW04021R00FKED</span></div>
<div class="b" style="left:229.50px;top:612.33px;width:69.20px;height:14px;overflow:hidden;"><span class="t" style="left:2.90px;top:-0.20px;font-size:11.06px;line-height:14px;color:#1a1a1a;transform:scaleX(0.9073);">General</span></div>
<div class="b" style="left:299.20px;top:612.33px;width:283.50px;height:14px;overflow:hidden;"><span class="t" style="left:2.90px;top:-0.20px;font-size:11.06px;line-height:14px;color:#1a1a1a;transform:scaleX(0.9103);">Standard Thick Film Chip Resistors, 1R</span></div>
<div class="b" style="left:583.20px;top:612.33px;width:104.50px;height:14px;overflow:hidden;"><span class="t" style="left:2.90px;top:-0.20px;font-size:11.06px;line-height:14px;color:#1a1a1a;transform:scaleX(0.9029);">Resistor</span></div>
<div class="b" style="left:688.20px;top:612.33px;width:152.00px;height:14px;overflow:hidden;"><span class="t" style="left:2.90px;top:-0.20px;font-size:11.06px;line-height:14px;color:#1a1a1a;transform:scaleX(0.7873);">R</span></div>
<div class="b" style="left:840.70px;top:612.33px;width:151.30px;height:14px;overflow:hidden;"><span class="t" style="left:2.90px;top:-0.20px;font-size:11.06px;line-height:14px;color:#1a1a1a;transform:scaleX(0.8676);">RESC100X50X40L25_20 (N)</span></div>
<div class="b" style="left:48.00px;top:632.11px;width:181.00px;height:14px;overflow:hidden;"><span class="t" style="left:2.90px;top:-0.20px;font-size:11.06px;line-height:14px;color:#1a1a1a;transform:scaleX(0.8642);">CRCW04022K00FKED</span></div>
<div class="b" style="left:229.50px;top:632.11px;width:69.20px;height:14px;overflow:hidden;"><span class="t" style="left:2.90px;top:-0.20px;font-size:11.06px;line-height:14px;color:#1a1a1a;transform:scaleX(0.9073);">General</span></div>
<div class="b" style="left:299.20px;top:632.11px;width:283.50px;height:14px;overflow:hidden;"><span class="t" style="left:2.90px;top:-0.20px;font-size:11.06px;line-height:14px;color:#1a1a1a;transform:scaleX(0.9121);">Standard Thick Film Chip Resistors, 2K</span></div>
<div class="b" style="left:583.20px;top:632.11px;width:104.50px;height:14px;overflow:hidden;"><span class="t" style="left:2.90px;top:-0.20px;font-size:11.06px;line-height:14px;color:#1a1a1a;transform:scaleX(0.9029);">Resistor</span></div>
<div class="b" style="left:688.20px;top:632.11px;width:152.00px;height:14px;overflow:hidden;"><span class="t" style="left:2.90px;top:-0.20px;font-size:11.06px;line-height:14px;color:#1a1a1a;transform:scaleX(0.7873);">R</span></div>
<div class="b" style="left:840.70px;top:632.11px;width:151.30px;height:14px;overflow:hidden;"><span class="t" style="left:2.90px;top:-0.20px;font-size:11.06px;line-height:14px;color:#1a1a1a;transform:scaleX(0.8676);">RESC100X50X40L25_20 (N)</span></div>
<div class="b" style="left:48.00px;top:651.90px;width:181.00px;height:14px;overflow:hidden;"><span class="t" style="left:2.90px;top:-0.20px;font-size:11.06px;line-height:14px;color:#1a1a1a;transform:scaleX(0.8642);">CRCW04022K61FKED</span></div>
<div class="b" style="left:229.50px;top:651.90px;width:69.20px;height:14px;overflow:hidden;"><span class="t" style="left:2.90px;top:-0.20px;font-size:11.06px;line-height:14px;color:#1a1a1a;transform:scaleX(0.9073);">General</span></div>
<div class="b" style="left:299.20px;top:651.90px;width:283.50px;height:14px;overflow:hidden;"><span class="t" style="left:2.90px;top:-0.20px;font-size:11.06px;line-height:14px;color:#1a1a1a;transform:scaleX(0.9127);">Standard Thick Film Chip Resistors, 2K61</span></div>
<div class="b" style="left:583.20px;top:651.90px;width:104.50px;height:14px;overflow:hidden;"><span class="t" style="left:2.90px;top:-0.20px;font-size:11.06px;line-height:14px;color:#1a1a1a;transform:scaleX(0.9029);">Resistor</span></div>
<div class="b" style="left:688.20px;top:651.90px;width:152.00px;height:14px;overflow:hidden;"><span class="t" style="left:2.90px;top:-0.20px;font-size:11.06px;line-height:14px;color:#1a1a1a;transform:scaleX(0.7873);">R</span></div>
<div class="b" style="left:840.70px;top:651.90px;width:151.30px;height:14px;overflow:hidden;"><span class="t" style="left:2.90px;top:-0.20px;font-size:11.06px;line-height:14px;color:#1a1a1a;transform:scaleX(0.8676);">RESC100X50X40L25_20 (N)</span></div>
<div class="b" style="left:48.00px;top:671.69px;width:181.00px;height:14px;overflow:hidden;"><span class="t" style="left:2.90px;top:-0.20px;font-size:11.06px;line-height:14px;color:#1a1a1a;transform:scaleX(0.8642);">CRCW04023K83FKED</span></div>
<div class="b" style="left:229.50px;top:671.69px;width:69.20px;height:14px;overflow:hidden;"><span class="t" style="left:2.90px;top:-0.20px;font-size:11.06px;line-height:14px;color:#1a1a1a;transform:scaleX(0.9073);">General</span></div>
<div class="b" style="left:299.20px;top:671.69px;width:283.50px;height:14px;overflow:hidden;"><span class="t" style="left:2.90px;top:-0.20px;font-size:11.06px;line-height:14px;color:#1a1a1a;transform:scaleX(0.9127);">Standard Thick Film Chip Resistors, 3K83</span></div>
<div class="b" style="left:583.20px;top:671.69px;width:104.50px;height:14px;overflow:hidden;"><span class="t" style="left:2.90px;top:-0.20px;font-size:11.06px;line-height:14px;color:#1a1a1a;transform:scaleX(0.9029);">Resistor</span></div>
<div class="b" style="left:688.20px;top:671.69px;width:152.00px;height:14px;overflow:hidden;"><span class="t" style="left:2.90px;top:-0.20px;font-size:11.06px;line-height:14px;color:#1a1a1a;transform:scaleX(0.7873);">R</span></div>
<div class="b" style="left:840.70px;top:671.69px;width:151.30px;height:14px;overflow:hidden;"><span class="t" style="left:2.90px;top:-0.20px;font-size:11.06px;line-height:14px;color:#1a1a1a;transform:scaleX(0.8676);">RESC100X50X40L25_20 (N)</span></div>
<div class="b" style="left:48.00px;top:691.47px;width:181.00px;height:14px;overflow:hidden;"><span class="t" style="left:2.90px;top:-0.20px;font-size:11.06px;line-height:14px;color:#1a1a1a;transform:scaleX(0.8642);">CRCW04024K70FKED</span></div>
<div class="b" style="left:229.50px;top:691.47px;width:69.20px;height:14px;overflow:hidden;"><span class="t" style="left:2.90px;top:-0.20px;font-size:11.06px;line-height:14px;color:#1a1a1a;transform:scaleX(0.9073);">General</span></div>
<div class="b" style="left:299.20px;top:691.47px;width:283.50px;height:14px;overflow:hidden;"><span class="t" style="left:2.90px;top:-0.20px;font-size:11.06px;line-height:14px;color:#1a1a1a;transform:scaleX(0.9127);">Standard Thick Film Chip Resistors, 4K70</span></div>
<div class="b" style="left:583.20px;top:691.47px;width:104.50px;height:14px;overflow:hidden;"><span class="t" style="left:2.90px;top:-0.20px;font-size:11.06px;line-height:14px;color:#1a1a1a;transform:scaleX(0.9029);">Resistor</span></div>
<div class="b" style="left:688.20px;top:691.47px;width:152.00px;height:14px;overflow:hidden;"><span class="t" style="left:2.90px;top:-0.20px;font-size:11.06px;line-height:14px;color:#1a1a1a;transform:scaleX(0.7873);">R</span></div>
<div class="b" style="left:840.70px;top:691.47px;width:151.30px;height:14px;overflow:hidden;"><span class="t" style="left:2.90px;top:-0.20px;font-size:11.06px;line-height:14px;color:#1a1a1a;transform:scaleX(0.8676);">RESC100X50X40L25_20 (N)</span></div>
<div class="b" style="left:593.50px;top:349.60px;width:3.00px;height:3.00px;background:#000;"></div>
<div class="b" style="left:992.50px;top:196.00px;width:14.50px;height:516.00px;background:#f0f0f0;"></div>
<div class="b" style="left:992.50px;top:196.00px;width:15.00px;height:3.50px;background:#fff;border:1px solid #8c8c8c;box-sizing:border-box;"></div>
<svg class="b" style="left:995.50px;top:205.00px;" width="9" height="7" viewBox="0 0 9 7"><path d="M1 5.5l3.5-3.5 3.5 3.5" stroke="#444" stroke-width="1.4" fill="none"/></svg>
<div class="b" style="left:993.00px;top:215.00px;width:14.00px;height:114.00px;background:#cdcdcd;"></div>
<svg class="b" style="left:995.50px;top:700.50px;" width="9" height="7" viewBox="0 0 9 7"><path d="M1 1.5l3.5 3.5 3.5-3.5" stroke="#444" stroke-width="1.4" fill="none"/></svg>
<div class="b" style="left:32.50px;top:712.00px;width:974.50px;height:15.00px;background:#f0f0f0;"></div>
<div class="b" style="left:32.50px;top:712.50px;width:3.50px;height:14.00px;background:#fff;border:1px solid #8c8c8c;box-sizing:border-box;"></div>
<svg class="b" style="left:40.00px;top:715.00px;" width="7" height="9" viewBox="0 0 7 9"><path d="M5.5 1l-3.5 3.5 3.5 3.5" stroke="#444" stroke-width="1.4" fill="none"/></svg>
<div class="b" style="left:51.50px;top:712.50px;width:95.50px;height:14.00px;background:#cdcdcd;"></div>
<svg class="b" style="left:981.30px;top:715.00px;" width="7" height="9" viewBox="0 0 7 9"><path d="M1.5 1l3.5 3.5-3.5 3.5" stroke="#444" stroke-width="1.4" fill="none"/></svg>
<div class="b" style="left:1047.00px;top:141.00px;width:250.00px;height:171.00px;background:linear-gradient(#474747,#aaaaaa);"></div>
<svg class="b" style="left:1047.00px;top:141.00px;" width="250" height="171" viewBox="0 0 250 171"><rect x="69" y="29.200" width="112.200" height="112.500" fill="#4f6f7a"/><g fill="#3b8ba3" stroke="#5caa3a" stroke-width="1.100"><rect x="75.65" y="24.700" width="5.100" height="11.600" rx="2.550"/><rect x="75.65" y="135.200" width="5.100" height="11.600" rx="2.550"/><rect x="64.600" y="36.05" width="11.200" height="5.100" ry="2.550"/><rect x="174.800" y="36.05" width="11.200" height="5.100" ry="2.550"/><rect x="81.91" y="24.700" width="5.100" height="11.600" rx="2.550"/><rect x="81.91" y="135.200" width="5.100" height="11.600" rx="2.550"/><rect x="64.600" y="42.31" width="11.200" height="5.100" ry="2.550"/><rect x="174.800" y="42.31" width="11.200" height="5.100" ry="2.550"/><rect x="88.17" y="24.700" width="5.100" height="11.600" rx="2.550"/><rect x="88.17" y="135.200" width="5.100" height="11.600" rx="2.550"/><rect x="64.600" y="48.57" width="11.200" height="5.100" ry="2.550"/><rect x="174.800" y="48.57" width="11.200" height="5.100" ry="2.550"/><rect x="94.43" y="24.700" width="5.100" height="11.600" rx="2.550"/><rect x="94.43" y="135.200" width="5.100" height="11.600" rx="2.550"/><rect x="64.600" y="54.83" width="11.200" height="5.100" ry="2.550"/><rect x="174.800" y="54.83" width="11.200" height="5.100" ry="2.550"/><rect x="100.69" y="24.700" width="5.100" height="11.600" rx="2.550"/><rect x="100.69" y="135.200" width="5.100" height="11.600" rx="2.550"/><rect x="64.600" y="61.09" width="11.200" height="5.100" ry="2.550"/><rect x="174.800" y="61.09" width="11.200" height="5.100" ry="2.550"/><rect x="106.95" y="24.700" width="5.100" height="11.600" rx="2.550"/><rect x="106.95" y="135.200" width="5.100" height="11.600" rx="2.550"/><rect x="64.600" y="67.35" width="11.200" height="5.100" ry="2.550"/><rect x="174.800" y="67.35" width="11.200" height="5.100" ry="2.550"/><rect x="113.21" y="24.700" width="5.100" height="11.600" rx="2.550"/><rect x="113.21" y="135.200" width="5.100" height="11.600" rx="2.550"/><rect x="64.600" y="73.61" width="11.200" height="5.100" ry="2.550"/><rect x="174.800" y="73.61" width="11.200" height="5.100" ry="2.550"/><rect x="119.47" y="24.700" width="5.100" height="11.600" rx="2.550"/><rect x="119.47" y="135.200" width="5.100" height="11.600" rx="2.550"/><rect x="64.600" y="79.87" width="11.200" height="5.100" ry="2.550"/><rect x="174.800" y="79.87" width="11.200" height="5.100" ry="2.550"/><rect x="125.73" y="24.700" width="5.100" height="11.600" rx="2.550"/><rect x="125.73" y="135.200" width="5.100" height="11.600" rx="2.550"/><rect x="64.600" y="86.13" width="11.200" height="5.100" ry="2.550"/><rect x="174.800" y="86.13" width="11.200" height="5.100" ry="2.550"/><rect x="131.99" y="24.700" width="5.100" height="11.600" rx="2.550"/><rect x="131.99" y="135.200" width="5.100" height="11.600" rx="2.550"/><rect x="64.600" y="92.39" width="11.200" height="5.100" ry="2.550"/><rect x="174.800" y="92.39" width="11.200" height="5.100" ry="2.550"/><rect x="138.25" y="24.700" width="5.100" height="11.600" rx="2.550"/><rect x="138.25" y="135.200" width="5.100" height="11.600" rx="2.550"/><rect x="64.600" y="98.65" width="11.200" height="5.100" ry="2.550"/><rect x="174.800" y="98.65" width="11.200" height="5.100" ry="2.550"/><rect x="144.51" y="24.700" width="5.100" height="11.600" rx="2.550"/><rect x="144.51" y="135.200" width="5.100" height="11.600" rx="2.550"/><rect x="64.600" y="104.91" width="11.200" height="5.100" ry="2.550"/><rect x="174.800" y="104.91" width="11.200" height="5.100" ry="2.550"/><rect x="150.77" y="24.700" width="5.100" height="11.600" rx="2.550"/><rect x="150.77" y="135.200" width="5.100" height="11.600" rx="2.550"/><rect x="64.600" y="111.17" width="11.200" height="5.100" ry="2.550"/><rect x="174.800" y="111.17" width="11.200" height="5.100" ry="2.550"/><rect x="157.03" y="24.700" width="5.100" height="11.600" rx="2.550"/><rect x="157.03" y="135.200" width="5.100" height="11.600" rx="2.550"/><rect x="64.600" y="117.43" width="11.200" height="5.100" ry="2.550"/><rect x="174.800" y="117.43" width="11.200" height="5.100" ry="2.550"/><rect x="163.29" y="24.700" width="5.100" height="11.600" rx="2.550"/><rect x="163.29" y="135.200" width="5.100" height="11.600" rx="2.550"/><rect x="64.600" y="123.69" width="11.200" height="5.100" ry="2.550"/><rect x="174.800" y="123.69" width="11.200" height="5.100" ry="2.550"/><rect x="169.55" y="24.700" width="5.100" height="11.600" rx="2.550"/><rect x="169.55" y="135.200" width="5.100" height="11.600" rx="2.550"/><rect x="64.600" y="129.95" width="11.200" height="5.100" ry="2.550"/><rect x="174.800" y="129.95" width="11.200" height="5.100" ry="2.550"/></g><rect x="70" y="30.200" width="110.200" height="110.500" fill="#3f7880" fill-opacity="0.55"/><path d="M77.900 38h94.400v94.700h-90.600l-3.800-3.800z" fill="#3c7779" stroke="#4f8c68" stroke-width="0.900"/><rect x="69" y="29.200" width="112.200" height="112.500" fill="none" stroke="#e6e84e" stroke-width="1.900"/><path d="M69 136.500l5.200 5.200" stroke="#e6e84e" stroke-width="1.500"/><text x="125" y="89.800" font-size="10.800" fill="#fff" text-anchor="middle" textLength="11" lengthAdjust="spacingAndGlyphs">65</text><text x="125" y="104.200" font-size="10.800" fill="#fff" text-anchor="middle" textLength="44.500" lengthAdjust="spacingAndGlyphs">GND_TAB</text></svg>
<span class="t" style="left:1076.00px;top:293.30px;font-size:10.86px;line-height:14px;color:#1c1c1c;transform:scaleX(0.9161);">QFN65P50_900X900X100L40X24T730 (N)</span>
<div class="b" style="left:1047.00px;top:332.00px;width:104.00px;height:17.60px;background:#cfcfcf;"></div>
<span class="t" style="left:1049.60px;top:334.00px;font-size:10.86px;line-height:14px;color:#a2a2a2;transform:scaleX(0.8532);">ALL</span>
<svg class="b" style="left:1141.00px;top:337.00px;" width="8" height="6" viewBox="0 0 8 6"><path d="M1.5 1.5l2.5 2.5 2.5-2.5" stroke="#9a9a9a" stroke-width="1" fill="none"/></svg>
<div class="b" style="left:1047.00px;top:355.00px;width:250.00px;height:391.50px;background:#dcdcdc;"></div>
<svg class="b" style="left:1047.00px;top:355.00px;" width="250" height="391.5" viewBox="0 0 250 391.5"><rect x="58.800" y="17.700" width="132.800" height="363.700" fill="#fff"/><rect x="69.00" y="28.30" width="112.30" height="335.40" fill="#fff8d7" stroke="#2c49f2" stroke-width="1.300"/><path d="M59.40 48.70H69.00M59.40 58.90H69.00M59.40 69.10H69.00M59.40 79.30H69.00M59.40 89.50H69.00M59.40 99.70H69.00M59.40 109.90H69.00M59.40 120.10H69.00M59.40 130.30H69.00M59.40 140.50H69.00M59.40 150.70H69.00M59.40 160.90H69.00M59.40 171.10H69.00M59.40 181.30H69.00M59.40 191.50H69.00M59.40 201.70H69.00M59.40 211.90H69.00M59.40 222.10H69.00M59.40 232.30H69.00M59.40 242.50H69.00M59.40 252.70H69.00M181.30 48.70H191.20M181.30 58.90H191.20M181.30 69.10H191.20M181.30 79.30H191.20M181.30 89.50H191.20M181.30 99.70H191.20M181.30 109.90H191.20M181.30 120.10H191.20M181.30 130.30H191.20M181.30 140.50H191.20M181.30 150.70H191.20M181.30 160.90H191.20M181.30 171.10H191.20M181.30 181.30H191.20M181.30 191.50H191.20M181.30 201.70H191.20M181.30 211.90H191.20M181.30 222.10H191.20M181.30 232.30H191.20M181.30 242.50H191.20M181.30 252.70H191.20M181.30 262.90H191.20M181.30 273.10H191.20M181.30 283.30H191.20M181.30 293.50H191.20M181.30 303.70H191.20M181.30 313.90H191.20M181.30 324.10H191.20M181.30 334.30H191.20M181.30 344.50H191.20M109.90 18.40V28.30M120.10 18.40V28.30M130.30 18.40V28.30M140.50 18.40V28.30M150.70 18.40V28.30M160.90 18.40V28.30M89.50 363.70V374.40M99.70 363.70V374.40M109.90 363.70V374.40M120.10 363.70V374.40M130.30 363.70V374.40M140.50 363.70V374.40M150.70 363.70V374.40M160.90 363.70V374.40" stroke="#2c49f2" stroke-width="1.100" fill="none"/><path d="M57.50 46.60l4.20 4.20M61.70 46.60l-4.20 4.20M57.50 56.80l4.20 4.20M61.70 56.80l-4.20 4.20M57.50 67.00l4.20 4.20M61.70 67.00l-4.20 4.20M57.50 77.20l4.20 4.20M61.70 77.20l-4.20 4.20M57.50 87.40l4.20 4.20M61.70 87.40l-4.20 4.20M57.50 97.60l4.20 4.20M61.70 97.60l-4.20 4.20M57.50 107.80l4.20 4.20M61.70 107.80l-4.20 4.20M57.50 118.00l4.20 4.20M61.70 118.00l-4.20 4.20M57.50 128.20l4.20 4.20M61.70 128.20l-4.20 4.20M57.50 138.40l4.20 4.20M61.70 138.40l-4.20 4.20M57.50 148.60l4.20 4.20M61.70 148.60l-4.20 4.20M57.50 158.80l4.20 4.20M61.70 158.80l-4.20 4.20M57.50 169.00l4.20 4.20M61.70 169.00l-4.20 4.20M57.50 179.20l4.20 4.20M61.70 179.20l-4.20 4.20M57.50 189.40l4.20 4.20M61.70 189.40l-4.20 4.20M57.50 199.60l4.20 4.20M61.70 199.60l-4.20 4.20M57.50 209.80l4.20 4.20M61.70 209.80l-4.20 4.20M57.50 220.00l4.20 4.20M61.70 220.00l-4.20 4.20M57.50 230.20l4.20 4.20M61.70 230.20l-4.20 4.20M57.50 240.40l4.20 4.20M61.70 240.40l-4.20 4.20M57.50 250.60l4.20 4.20M61.70 250.60l-4.20 4.20M188.90 46.60l4.20 4.20M193.10 46.60l-4.20 4.20M188.90 56.80l4.20 4.20M193.10 56.80l-4.20 4.20M188.90 67.00l4.20 4.20M193.10 67.00l-4.20 4.20M188.90 77.20l4.20 4.20M193.10 77.20l-4.20 4.20M188.90 87.40l4.20 4.20M193.10 87.40l-4.20 4.20M188.90 97.60l4.20 4.20M193.10 97.60l-4.20 4.20M188.90 107.80l4.20 4.20M193.10 107.80l-4.20 4.20M188.90 118.00l4.20 4.20M193.10 118.00l-4.20 4.20M188.90 128.20l4.20 4.20M193.10 128.20l-4.20 4.20M188.90 138.40l4.20 4.20M193.10 138.40l-4.20 4.20M188.90 148.60l4.20 4.20M193.10 148.60l-4.20 4.20M188.90 158.80l4.20 4.20M193.10 158.80l-4.20 4.20M188.90 169.00l4.20 4.20M193.10 169.00l-4.20 4.20M188.90 179.20l4.20 4.20M193.10 179.20l-4.20 4.20M188.90 189.40l4.20 4.20M193.10 189.40l-4.20 4.20M188.90 199.60l4.20 4.20M193.10 199.60l-4.20 4.20M188.90 209.80l4.20 4.20M193.10 209.80l-4.20 4.20M188.90 220.00l4.20 4.20M193.10 220.00l-4.20 4.20M188.90 230.20l4.20 4.20M193.10 230.20l-4.20 4.20M188.90 240.40l4.20 4.20M193.10 240.40l-4.20 4.20M188.90 250.60l4.20 4.20M193.10 250.60l-4.20 4.20M188.90 260.80l4.20 4.20M193.10 260.80l-4.20 4.20M188.90 271.00l4.20 4.20M193.10 271.00l-4.20 4.20M188.90 281.20l4.20 4.20M193.10 281.20l-4.20 4.20M188.90 291.40l4.20 4.20M193.10 291.40l-4.20 4.20M188.90 301.60l4.20 4.20M193.10 301.60l-4.20 4.20M188.90 311.80l4.20 4.20M193.10 311.80l-4.20 4.20M188.90 322.00l4.20 4.20M193.10 322.00l-4.20 4.20M188.90 332.20l4.20 4.20M193.10 332.20l-4.20 4.20M188.90 342.40l4.20 4.20M193.10 342.40l-4.20 4.20M107.80 16.50l4.20 4.20M112.00 16.50l-4.20 4.20M118.00 16.50l4.20 4.20M122.20 16.50l-4.20 4.20M128.20 16.50l4.20 4.20M132.40 16.50l-4.20 4.20M138.40 16.50l4.20 4.20M142.60 16.50l-4.20 4.20M148.60 16.50l4.20 4.20M152.80 16.50l-4.20 4.20M158.80 16.50l4.20 4.20M163.00 16.50l-4.20 4.20M87.40 372.10l4.20 4.20M91.60 372.10l-4.20 4.20M97.60 372.10l4.20 4.20M101.80 372.10l-4.20 4.20M107.80 372.10l4.20 4.20M112.00 372.10l-4.20 4.20M118.00 372.10l4.20 4.20M122.20 372.10l-4.20 4.20M128.20 372.10l4.20 4.20M132.40 372.10l-4.20 4.20M138.40 372.10l4.20 4.20M142.60 372.10l-4.20 4.20M148.60 372.10l4.20 4.20M152.80 372.10l-4.20 4.20M158.80 372.10l4.20 4.20M163.00 372.10l-4.20 4.20" stroke="#4a66f2" stroke-width="0.750" fill="none"/><g font-size="5.3" font-weight="bold" fill="#000"><text x="67.20" y="46.50" text-anchor="end" textLength="4.78" lengthAdjust="spacingAndGlyphs">38</text><text x="71.70" y="48.90" text-anchor="start" textLength="33.45" lengthAdjust="spacingAndGlyphs">DCDC_ANA_SW</text><text x="67.20" y="56.70" text-anchor="end" textLength="4.78" lengthAdjust="spacingAndGlyphs">48</text><text x="71.70" y="59.10" text-anchor="start" textLength="23.18" lengthAdjust="spacingAndGlyphs">VDD_ANA1</text><text x="67.20" y="66.90" text-anchor="end" textLength="4.78" lengthAdjust="spacingAndGlyphs">36</text><text x="71.70" y="69.30" text-anchor="start" textLength="18.16" lengthAdjust="spacingAndGlyphs">LDO_IN1</text><text x="67.20" y="77.10" text-anchor="end" textLength="4.78" lengthAdjust="spacingAndGlyphs">25</text><text x="71.70" y="79.50" text-anchor="start" textLength="18.16" lengthAdjust="spacingAndGlyphs">LDO_IN2</text><text x="67.20" y="87.30" text-anchor="end" textLength="4.78" lengthAdjust="spacingAndGlyphs">40</text><text x="71.70" y="89.70" text-anchor="start" textLength="35.04" lengthAdjust="spacingAndGlyphs">DCDC_PA_SW_P</text><text x="67.20" y="97.50" text-anchor="end" textLength="4.78" lengthAdjust="spacingAndGlyphs">41</text><text x="71.70" y="99.90" text-anchor="start" textLength="35.28" lengthAdjust="spacingAndGlyphs">DCDC_PA_SW_N</text><text x="67.20" y="107.70" text-anchor="end" textLength="4.78" lengthAdjust="spacingAndGlyphs">42</text><text x="71.70" y="110.10" text-anchor="start" textLength="31.94" lengthAdjust="spacingAndGlyphs">DCDC_PA_OUT</text><text x="67.20" y="117.90" text-anchor="end" textLength="4.78" lengthAdjust="spacingAndGlyphs">33</text><text x="71.70" y="120.30" text-anchor="start" textLength="23.82" lengthAdjust="spacingAndGlyphs">VDD_PA_IN</text><text x="67.20" y="128.10" text-anchor="end" textLength="4.78" lengthAdjust="spacingAndGlyphs">43</text><text x="71.70" y="130.50" text-anchor="start" textLength="31.78" lengthAdjust="spacingAndGlyphs">DCDC_DIG_SW</text><text x="67.20" y="138.30" text-anchor="end" textLength="2.39" lengthAdjust="spacingAndGlyphs">9</text><text x="71.70" y="140.70" text-anchor="start" textLength="21.51" lengthAdjust="spacingAndGlyphs">VDD_DIG1</text><text x="67.20" y="148.50" text-anchor="end" textLength="4.78" lengthAdjust="spacingAndGlyphs">56</text><text x="71.70" y="150.90" text-anchor="start" textLength="21.51" lengthAdjust="spacingAndGlyphs">VDD_DIG2</text><text x="67.20" y="158.70" text-anchor="end" textLength="4.78" lengthAdjust="spacingAndGlyphs">45</text><text x="71.70" y="161.10" text-anchor="start" textLength="41.10" lengthAdjust="spacingAndGlyphs">DCDC_ANA2_SW_P</text><text x="67.20" y="168.90" text-anchor="end" textLength="4.78" lengthAdjust="spacingAndGlyphs">46</text><text x="71.70" y="171.30" text-anchor="start" textLength="41.34" lengthAdjust="spacingAndGlyphs">DCDC_ANA2_SW_N</text><text x="67.20" y="179.10" text-anchor="end" textLength="4.78" lengthAdjust="spacingAndGlyphs">47</text><text x="71.70" y="181.50" text-anchor="start" textLength="23.18" lengthAdjust="spacingAndGlyphs">VDD_ANA2</text><text x="67.20" y="189.30" text-anchor="end" textLength="4.78" lengthAdjust="spacingAndGlyphs">49</text><text x="71.70" y="191.70" text-anchor="start" textLength="21.26" lengthAdjust="spacingAndGlyphs">VDD_RAM</text><text x="67.20" y="199.50" text-anchor="end" textLength="4.78" lengthAdjust="spacingAndGlyphs">24</text><text x="71.70" y="201.90" text-anchor="start" textLength="19.59" lengthAdjust="spacingAndGlyphs">VDD_PLL</text><text x="67.20" y="209.70" text-anchor="end" textLength="4.78" lengthAdjust="spacingAndGlyphs">27</text><text x="71.70" y="212.10" text-anchor="start" textLength="6.21" lengthAdjust="spacingAndGlyphs">NC</text><text x="67.20" y="219.90" text-anchor="end" textLength="4.78" lengthAdjust="spacingAndGlyphs">28</text><text x="71.70" y="222.30" text-anchor="start" textLength="6.21" lengthAdjust="spacingAndGlyphs">NC</text><text x="67.20" y="230.10" text-anchor="end" textLength="4.78" lengthAdjust="spacingAndGlyphs">26</text><text x="71.70" y="232.50" text-anchor="start" textLength="6.21" lengthAdjust="spacingAndGlyphs">NC</text><text x="67.20" y="240.30" text-anchor="end" textLength="4.78" lengthAdjust="spacingAndGlyphs">52</text><text x="71.70" y="242.70" text-anchor="start" textLength="27.63" lengthAdjust="spacingAndGlyphs">RTC_XTAL_N</text><text x="67.20" y="250.50" text-anchor="end" textLength="4.78" lengthAdjust="spacingAndGlyphs">51</text><text x="71.70" y="252.90" text-anchor="start" textLength="27.40" lengthAdjust="spacingAndGlyphs">RTC_XTAL_P</text><text x="183.60" y="46.50" text-anchor="start" textLength="4.78" lengthAdjust="spacingAndGlyphs">31</text><text x="178.60" y="48.90" text-anchor="end" textLength="14.57" lengthAdjust="spacingAndGlyphs">RF_BG</text><text x="183.60" y="56.70" text-anchor="start" textLength="4.78" lengthAdjust="spacingAndGlyphs">14</text><text x="178.60" y="59.10" text-anchor="end" textLength="32.02" lengthAdjust="spacingAndGlyphs">FLASH_SPI_CS</text><text x="183.60" y="66.90" text-anchor="start" textLength="4.78" lengthAdjust="spacingAndGlyphs">13</text><text x="178.60" y="69.30" text-anchor="end" textLength="37.04" lengthAdjust="spacingAndGlyphs">FLASH_SPI_MISO</text><text x="183.60" y="77.10" text-anchor="start" textLength="4.78" lengthAdjust="spacingAndGlyphs">12</text><text x="178.60" y="79.50" text-anchor="end" textLength="37.04" lengthAdjust="spacingAndGlyphs">FLASH_SPI_MOSI</text><text x="183.60" y="87.30" text-anchor="start" textLength="4.55" lengthAdjust="spacingAndGlyphs">11</text><text x="178.60" y="89.70" text-anchor="end" textLength="34.88" lengthAdjust="spacingAndGlyphs">FLASH_SPI_CLK</text><text x="183.60" y="97.50" text-anchor="start" textLength="4.78" lengthAdjust="spacingAndGlyphs">61</text><text x="178.60" y="99.90" text-anchor="end" textLength="27.95" lengthAdjust="spacingAndGlyphs">UART1_nCTS</text><text x="183.60" y="107.70" text-anchor="start" textLength="4.78" lengthAdjust="spacingAndGlyphs">50</text><text x="178.60" y="110.10" text-anchor="end" textLength="27.95" lengthAdjust="spacingAndGlyphs">UART1_nRTS</text><text x="183.60" y="117.90" text-anchor="start" textLength="4.78" lengthAdjust="spacingAndGlyphs">55</text><text x="178.60" y="120.30" text-anchor="end" textLength="22.22" lengthAdjust="spacingAndGlyphs">UART1_TX</text><text x="183.60" y="128.10" text-anchor="start" textLength="4.78" lengthAdjust="spacingAndGlyphs">57</text><text x="178.60" y="130.50" text-anchor="end" textLength="22.70" lengthAdjust="spacingAndGlyphs">UART1_RX</text><text x="183.60" y="138.30" text-anchor="start" textLength="4.78" lengthAdjust="spacingAndGlyphs">58</text><text x="178.60" y="140.70" text-anchor="end" textLength="18.16" lengthAdjust="spacingAndGlyphs">TEST_58</text><text x="183.60" y="148.50" text-anchor="start" textLength="4.78" lengthAdjust="spacingAndGlyphs">59</text><text x="178.60" y="150.90" text-anchor="end" textLength="18.16" lengthAdjust="spacingAndGlyphs">TEST_59</text><text x="183.60" y="158.70" text-anchor="start" textLength="4.78" lengthAdjust="spacingAndGlyphs">60</text><text x="178.60" y="161.10" text-anchor="end" textLength="18.16" lengthAdjust="spacingAndGlyphs">TEST_60</text><text x="183.60" y="168.90" text-anchor="start" textLength="4.78" lengthAdjust="spacingAndGlyphs">62</text><text x="178.60" y="171.30" text-anchor="end" textLength="18.16" lengthAdjust="spacingAndGlyphs">TEST_62</text><text x="183.60" y="179.10" text-anchor="start" textLength="4.78" lengthAdjust="spacingAndGlyphs">63</text><text x="178.60" y="181.50" text-anchor="end" textLength="6.21" lengthAdjust="spacingAndGlyphs">NC</text><text x="183.60" y="189.30" text-anchor="start" textLength="4.78" lengthAdjust="spacingAndGlyphs">64</text><text x="178.60" y="191.70" text-anchor="end" textLength="6.21" lengthAdjust="spacingAndGlyphs">NC</text><text x="183.60" y="199.50" text-anchor="start" textLength="2.39" lengthAdjust="spacingAndGlyphs">2</text><text x="178.60" y="201.90" text-anchor="end" textLength="23.58" lengthAdjust="spacingAndGlyphs">RESERVED</text><text x="183.60" y="209.70" text-anchor="start" textLength="2.39" lengthAdjust="spacingAndGlyphs">4</text><text x="178.60" y="212.10" text-anchor="end" textLength="23.41" lengthAdjust="spacingAndGlyphs">FORCE_AP</text><text x="183.60" y="219.90" text-anchor="start" textLength="2.39" lengthAdjust="spacingAndGlyphs">3</text><text x="178.60" y="222.30" text-anchor="end" textLength="10.03" lengthAdjust="spacingAndGlyphs">nHIB</text><text x="183.60" y="230.10" text-anchor="start" textLength="2.39" lengthAdjust="spacingAndGlyphs">8</text><text x="178.60" y="232.50" text-anchor="end" textLength="32.26" lengthAdjust="spacingAndGlyphs">HOST_SPI_nCS</text><text x="183.60" y="240.30" text-anchor="start" textLength="2.39" lengthAdjust="spacingAndGlyphs">5</text><text x="178.60" y="242.70" text-anchor="end" textLength="32.50" lengthAdjust="spacingAndGlyphs">HOST_SPI_CLK</text><text x="183.60" y="250.50" text-anchor="start" textLength="2.39" lengthAdjust="spacingAndGlyphs">6</text><text x="178.60" y="252.90" text-anchor="end" textLength="34.65" lengthAdjust="spacingAndGlyphs">HOST_SPI_MOSI</text><text x="183.60" y="260.70" text-anchor="start" textLength="2.39" lengthAdjust="spacingAndGlyphs">7</text><text x="178.60" y="263.10" text-anchor="end" textLength="34.65" lengthAdjust="spacingAndGlyphs">HOST_SPI_MISO</text><text x="183.60" y="270.90" text-anchor="start" textLength="4.78" lengthAdjust="spacingAndGlyphs">15</text><text x="178.60" y="273.30" text-anchor="end" textLength="21.98" lengthAdjust="spacingAndGlyphs">HOSTINTR</text><text x="183.60" y="281.10" text-anchor="start" textLength="4.78" lengthAdjust="spacingAndGlyphs">16</text><text x="178.60" y="283.50" text-anchor="end" textLength="6.21" lengthAdjust="spacingAndGlyphs">NC</text><text x="183.60" y="291.30" text-anchor="start" textLength="4.78" lengthAdjust="spacingAndGlyphs">23</text><text x="178.60" y="293.70" text-anchor="end" textLength="29.06" lengthAdjust="spacingAndGlyphs">WLAN_XTALP</text><text x="183.60" y="301.50" text-anchor="start" textLength="4.78" lengthAdjust="spacingAndGlyphs">22</text><text x="178.60" y="303.90" text-anchor="end" textLength="29.30" lengthAdjust="spacingAndGlyphs">WLAN_XTALN</text><text x="183.60" y="311.70" text-anchor="start" textLength="4.78" lengthAdjust="spacingAndGlyphs">53</text><text x="178.60" y="314.10" text-anchor="end" textLength="6.21" lengthAdjust="spacingAndGlyphs">NC</text><text x="183.60" y="321.90" text-anchor="start" textLength="4.78" lengthAdjust="spacingAndGlyphs">29</text><text x="178.60" y="324.30" text-anchor="end" textLength="23.58" lengthAdjust="spacingAndGlyphs">RESERVED</text><text x="183.60" y="332.10" text-anchor="start" textLength="4.78" lengthAdjust="spacingAndGlyphs">30</text><text x="178.60" y="334.50" text-anchor="end" textLength="23.58" lengthAdjust="spacingAndGlyphs">RESERVED</text><text x="183.60" y="342.30" text-anchor="start" textLength="2.39" lengthAdjust="spacingAndGlyphs">1</text><text x="178.60" y="344.70" text-anchor="end" textLength="6.21" lengthAdjust="spacingAndGlyphs">NC</text><text x="107.60" y="25.80" text-anchor="end" textLength="4.78" lengthAdjust="spacingAndGlyphs">37</text><text x="109.70" y="31.20" text-anchor="end" textLength="33.69" lengthAdjust="spacingAndGlyphs" transform="rotate(-90 109.70 31.20)">VIN_DCDC_ANA</text><text x="117.80" y="25.80" text-anchor="end" textLength="4.78" lengthAdjust="spacingAndGlyphs">39</text><text x="119.90" y="31.20" text-anchor="end" textLength="30.03" lengthAdjust="spacingAndGlyphs" transform="rotate(-90 119.90 31.20)">VIN_DCDC_PA</text><text x="128.00" y="25.80" text-anchor="end" textLength="4.78" lengthAdjust="spacingAndGlyphs">44</text><text x="130.10" y="31.20" text-anchor="end" textLength="32.02" lengthAdjust="spacingAndGlyphs" transform="rotate(-90 130.10 31.20)">VIN_DCDC_DIG</text><text x="138.20" y="25.80" text-anchor="end" textLength="4.78" lengthAdjust="spacingAndGlyphs">54</text><text x="140.30" y="31.20" text-anchor="end" textLength="16.49" lengthAdjust="spacingAndGlyphs" transform="rotate(-90 140.30 31.20)">VIN_IO2</text><text x="148.40" y="25.80" text-anchor="end" textLength="4.78" lengthAdjust="spacingAndGlyphs">10</text><text x="150.50" y="31.20" text-anchor="end" textLength="16.49" lengthAdjust="spacingAndGlyphs" transform="rotate(-90 150.50 31.20)">VIN_IO1</text><text x="158.60" y="25.80" text-anchor="end" textLength="4.78" lengthAdjust="spacingAndGlyphs">32</text><text x="160.70" y="31.20" text-anchor="end" textLength="16.96" lengthAdjust="spacingAndGlyphs" transform="rotate(-90 160.70 31.20)">nRESET</text><text x="87.20" y="372.20" text-anchor="end" textLength="4.78" lengthAdjust="spacingAndGlyphs">35</text><text x="89.30" y="361.00" text-anchor="start" textLength="11.47" lengthAdjust="spacingAndGlyphs" transform="rotate(-90 89.30 361.00)">SOP0</text><text x="97.40" y="372.20" text-anchor="end" textLength="4.78" lengthAdjust="spacingAndGlyphs">34</text><text x="99.50" y="361.00" text-anchor="start" textLength="11.47" lengthAdjust="spacingAndGlyphs" transform="rotate(-90 99.50 361.00)">SOP1</text><text x="107.60" y="372.20" text-anchor="end" textLength="4.78" lengthAdjust="spacingAndGlyphs">21</text><text x="109.70" y="361.00" text-anchor="start" textLength="32.98" lengthAdjust="spacingAndGlyphs" transform="rotate(-90 109.70 361.00)">SOP2/TCXO_EN</text><text x="117.80" y="372.20" text-anchor="end" textLength="4.78" lengthAdjust="spacingAndGlyphs">19</text><text x="119.90" y="361.00" text-anchor="start" textLength="23.58" lengthAdjust="spacingAndGlyphs" transform="rotate(-90 119.90 361.00)">RESERVED</text><text x="128.00" y="372.20" text-anchor="end" textLength="4.78" lengthAdjust="spacingAndGlyphs">20</text><text x="130.10" y="361.00" text-anchor="start" textLength="6.21" lengthAdjust="spacingAndGlyphs" transform="rotate(-90 130.10 361.00)">NC</text><text x="138.20" y="372.20" text-anchor="end" textLength="4.78" lengthAdjust="spacingAndGlyphs">18</text><text x="140.30" y="361.00" text-anchor="start" textLength="6.21" lengthAdjust="spacingAndGlyphs" transform="rotate(-90 140.30 361.00)">NC</text><text x="148.40" y="372.20" text-anchor="end" textLength="4.78" lengthAdjust="spacingAndGlyphs">17</text><text x="150.50" y="361.00" text-anchor="start" textLength="6.21" lengthAdjust="spacingAndGlyphs" transform="rotate(-90 150.50 361.00)">NC</text><text x="158.60" y="372.20" text-anchor="end" textLength="4.78" lengthAdjust="spacingAndGlyphs">65</text><text x="160.70" y="361.00" text-anchor="start" textLength="9.56" lengthAdjust="spacingAndGlyphs" transform="rotate(-90 160.70 361.00)">GND</text><text x="63.60" y="380.80" text-anchor="start" textLength="21.98" lengthAdjust="spacingAndGlyphs">NW_PROC</text></g></svg>
<div class="b" style="left:7.00px;top:752.80px;width:1298.00px;height:1.40px;background:#fbfbfb;"></div>
<div class="b" style="left:7.00px;top:754.20px;width:1298.00px;height:24.00px;background:#bbc0cb;"></div>
<svg class="b" style="left:10.00px;top:759.00px;" width="16" height="16" viewBox="0 0 16 16"><rect x="1" y="5" width="3.400" height="9.600" fill="#4dab2c" stroke="#2f7c1c" stroke-width="0.600"/><rect x="4.600" y="5" width="3.400" height="9.600" fill="#55b233" stroke="#2f7c1c" stroke-width="0.600"/><rect x="8.200" y="7.400" width="3.400" height="7.200" fill="#80c860" stroke="#4d9a36" stroke-width="0.600"/><path d="M9.400 1.400h1.800l0.600 3.400h-3zM12.600 1.400h1.800l0.600 3.400h-3z" fill="#dfe8fb" stroke="#4a6ab0" stroke-width="0.600"/></svg>
<div class="b" style="left:29.60px;top:757.80px;width:30.20px;height:18.60px;background:linear-gradient(#fde3a4 0%,#fdd27c 45%,#fdc65c 50%,#fee08a 100%);border:1px solid #e0b860;box-sizing:border-box;border-radius:1px;"></div>
<div class="b" style="left:47.00px;top:758.50px;width:1.00px;height:17.00px;background:#f3c66c;"></div>
<svg class="b" style="left:31.50px;top:759.50px;" width="15" height="15" viewBox="0 0 15 15"><rect x="1" y="1" width="13" height="12.600" fill="#e9eefb" stroke="#26428c" stroke-width="1.500"/><path d="M3.600 3v8.600" stroke="#26428c" stroke-width="1.200"/><path d="M5.600 3.800h6.400M5.600 6h6.400M5.600 8.200h6.400M5.600 10.400h6.400" stroke="#26428c" stroke-width="1"/></svg>
<svg class="b" style="left:50.00px;top:766.00px;" width="6" height="4" viewBox="0 0 6 4"><path d="M0.3 0.5h4.6l-2.3 2.6z" fill="#444"/></svg>
<div class="b" style="left:64.20px;top:758.00px;width:1.00px;height:18.00px;background:#a4a9b4;"></div>
<span class="t" style="left:69.00px;top:761.40px;font-size:10.67px;line-height:14px;color:#333;transform:scaleX(0.9161);">Units:</span>
<div class="b" style="left:246.70px;top:21.00px;width:37.00px;height:3.20px;background:#000;"></div>
<div class="b" style="left:283.00px;top:6.00px;width:222.00px;height:32.70px;background:#fdebc8;"></div>
<span class="t an" style="left:292.60px;top:10.50px;font-size:20.40px;line-height:24px;transform:scaleX(1.0336);color:#000;">Quick Access Toolbar</span>
<div class="b" style="left:33.00px;top:39.60px;width:39.00px;height:3.60px;background:#000;"></div>
<div class="b" style="left:71.00px;top:23.20px;width:91.00px;height:33.30px;background:#fdebc8;"></div>
<span class="t an" style="left:81.60px;top:28.50px;font-size:20.40px;line-height:24px;transform:scaleX(0.9966);color:#000;">File Tab</span>
<div class="b" style="left:613.00px;top:69.00px;width:86.20px;height:33.00px;background:#fdebc8;"></div>
<span class="t an" style="left:622.90px;top:73.30px;font-size:20.40px;line-height:24px;transform:scaleX(0.9773);color:#000;">Ribbon</span>
<div class="b" style="left:178.40px;top:176.60px;width:114.00px;height:3.80px;background:#000;"></div>
<div class="b" style="left:291.80px;top:160.00px;width:176.20px;height:33.60px;background:#fdebc8;"></div>
<span class="t an" style="left:300.50px;top:165.40px;font-size:20.40px;line-height:24px;transform:scaleX(0.9936);color:#000;">Component &nbsp;Tabs</span>
<div class="b" style="left:1096.00px;top:304.50px;width:154.00px;height:33.20px;background:#fdebc8;"></div>
<span class="t an" style="left:1105.60px;top:309.50px;font-size:20.40px;line-height:24px;transform:scaleX(1.0276);color:#000;">Preview Panel</span>
<div class="b" style="left:46.00px;top:765.60px;width:50.00px;height:3.50px;background:#000;"></div>
<div class="b" style="left:95.00px;top:751.00px;width:190.10px;height:33.00px;background:#fdebc8;"></div>
<span class="t an" style="left:103.80px;top:755.40px;font-size:20.40px;line-height:24px;transform:scaleX(0.9896);color:#000;">Command &nbsp;Balloon</span>
<div class="b" style="left:463.20px;top:749.80px;width:117.80px;height:34.20px;background:#fdebc8;"></div>
<span class="t an" style="left:472.70px;top:756.30px;font-size:20.40px;line-height:24px;transform:scaleX(1.0339);color:#000;">Status Bar</span>
</body></html>
